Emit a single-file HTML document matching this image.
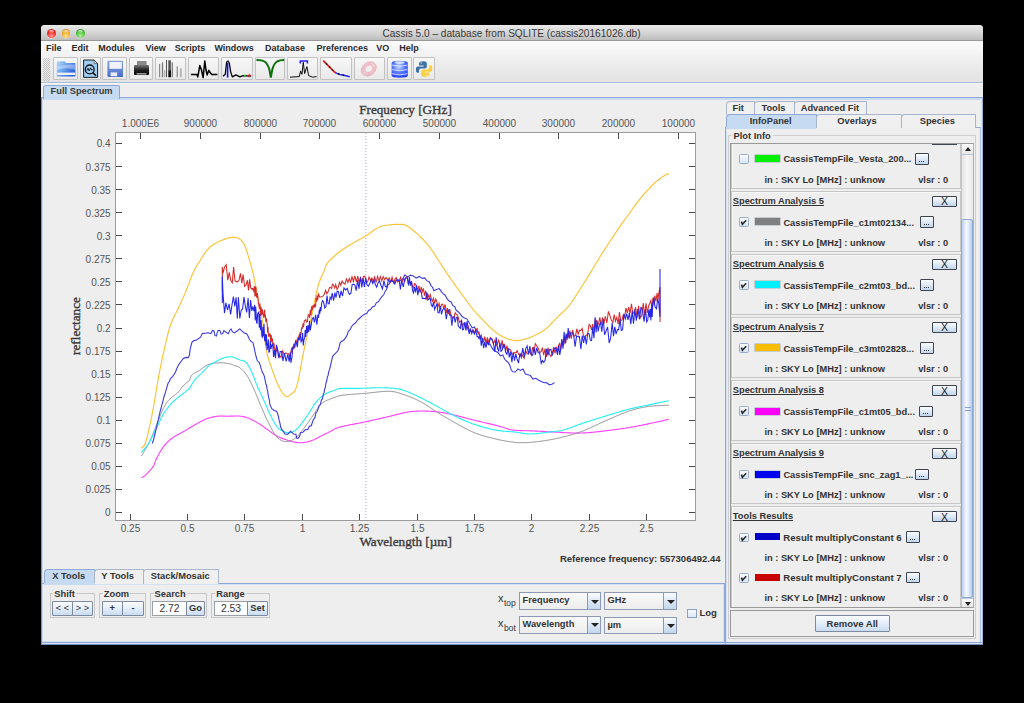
<!DOCTYPE html>
<html><head><meta charset="utf-8"><style>
html,body{margin:0;padding:0;background:#000;width:1024px;height:703px;overflow:hidden}
.a{position:absolute;box-sizing:border-box}
.t{position:absolute;white-space:pre}
</style></head><body>

<div class="a" style="left:41px;top:25px;width:942px;height:620px;background:#eeeeee;border-radius:4px 4px 0 0;"></div>
<div class="a" style="left:41px;top:25px;width:942px;height:16px;background:linear-gradient(#e9e9e9,#d4d4d4 55%,#bdbdbd);border-radius:4px 4px 0 0;border-bottom:1px solid #9a9a9a;"></div>
<div class="a" style="left:41px;top:41px;width:942px;height:41px;background:linear-gradient(#fcfcfc,#f0f0f0 40%,#e3e3e3);"></div>
<div class="a" style="left:41px;top:82px;width:942px;height:1px;background:#a9bad6;"></div>
<div class="a" style="left:41px;top:83px;width:942px;height:1px;background:#f6f6f6;"></div>
<div class="a" style="left:47.1px;top:29px;width:8.8px;height:8.8px;border-radius:50%;background:radial-gradient(circle at 50% 78%,#ff9a94 0,#ee2a22 55%,#a8231c 100%);box-shadow:0 0.5px 0.5px rgba(255,255,255,.6)"></div>
<div class="a" style="left:48.9px;top:29.8px;width:5.2px;height:3px;border-radius:50%;background:linear-gradient(rgba(255,255,255,.75),rgba(255,255,255,.1))"></div>
<div class="a" style="left:61.6px;top:29px;width:8.8px;height:8.8px;border-radius:50%;background:radial-gradient(circle at 50% 78%,#ffe58a 0,#f0a81e 55%,#b8790c 100%);box-shadow:0 0.5px 0.5px rgba(255,255,255,.6)"></div>
<div class="a" style="left:63.4px;top:29.8px;width:5.2px;height:3px;border-radius:50%;background:linear-gradient(rgba(255,255,255,.75),rgba(255,255,255,.1))"></div>
<div class="a" style="left:76.1px;top:29px;width:8.8px;height:8.8px;border-radius:50%;background:radial-gradient(circle at 50% 78%,#b6f09a 0,#4cc13a 55%,#2c7f22 100%);box-shadow:0 0.5px 0.5px rgba(255,255,255,.6)"></div>
<div class="a" style="left:77.9px;top:29.8px;width:5.2px;height:3px;border-radius:50%;background:linear-gradient(rgba(255,255,255,.75),rgba(255,255,255,.1))"></div>
<div class="t" style="left:311.50px;width:400px;text-align:center;top:28.95px;font:normal 10.1px/10.1px 'Liberation Sans';color:#3a3a3a;">Cassis 5.0 – database from SQLITE (cassis20161026.db)</div>
<div class="t" style="left:45.90px;top:43.88px;font:bold 9px/9px 'Liberation Sans';color:#2a2a2a;">File</div>
<div class="t" style="left:71.60px;top:43.88px;font:bold 9px/9px 'Liberation Sans';color:#2a2a2a;">Edit</div>
<div class="t" style="left:98.20px;top:43.88px;font:bold 9px/9px 'Liberation Sans';color:#2a2a2a;">Modules</div>
<div class="t" style="left:145.50px;top:43.88px;font:bold 9px/9px 'Liberation Sans';color:#2a2a2a;">View</div>
<div class="t" style="left:174.80px;top:43.88px;font:bold 9px/9px 'Liberation Sans';color:#2a2a2a;">Scripts</div>
<div class="t" style="left:214.40px;top:43.88px;font:bold 9px/9px 'Liberation Sans';color:#2a2a2a;">Windows</div>
<div class="t" style="left:265.00px;top:43.88px;font:bold 9px/9px 'Liberation Sans';color:#2a2a2a;">Database</div>
<div class="t" style="left:316.60px;top:43.88px;font:bold 9px/9px 'Liberation Sans';color:#2a2a2a;">Preferences</div>
<div class="t" style="left:376.30px;top:43.88px;font:bold 9px/9px 'Liberation Sans';color:#2a2a2a;">VO</div>
<div class="t" style="left:399.20px;top:43.88px;font:bold 9px/9px 'Liberation Sans';color:#2a2a2a;">Help</div>
<div class="a" style="left:43px;top:58px;width:7px;height:23px;background:repeating-conic-gradient(#c4c4c4 0 25%,transparent 0 50%) 0 0/2px 2px;"></div>
<div class="a" style="left:53px;top:57px;width:25px;height:23px;border:1px solid #c2c2c2;background:linear-gradient(#f7f7f7,#e9e9e9);border-radius:1px;"></div>
<div class="a" style="left:80px;top:57px;width:21px;height:23px;border:1px solid #c2c2c2;background:linear-gradient(#f7f7f7,#e9e9e9);border-radius:1px;"></div>
<div class="a" style="left:102px;top:57px;width:25px;height:23px;border:1px solid #c2c2c2;background:linear-gradient(#f7f7f7,#e9e9e9);border-radius:1px;"></div>
<div class="a" style="left:129px;top:57px;width:24px;height:23px;border:1px solid #c2c2c2;background:linear-gradient(#f7f7f7,#e9e9e9);border-radius:1px;"></div>
<div class="a" style="left:155px;top:57px;width:31px;height:23px;border:1px solid #c2c2c2;background:linear-gradient(#f7f7f7,#e9e9e9);border-radius:1px;"></div>
<div class="a" style="left:188px;top:57px;width:31px;height:23px;border:1px solid #c2c2c2;background:linear-gradient(#f7f7f7,#e9e9e9);border-radius:1px;"></div>
<div class="a" style="left:221px;top:57px;width:32px;height:23px;border:1px solid #c2c2c2;background:linear-gradient(#f7f7f7,#e9e9e9);border-radius:1px;"></div>
<div class="a" style="left:255px;top:57px;width:30px;height:23px;border:1px solid #c2c2c2;background:linear-gradient(#f7f7f7,#e9e9e9);border-radius:1px;"></div>
<div class="a" style="left:287px;top:57px;width:31px;height:23px;border:1px solid #c2c2c2;background:linear-gradient(#f7f7f7,#e9e9e9);border-radius:1px;"></div>
<div class="a" style="left:320px;top:57px;width:32px;height:23px;border:1px solid #c2c2c2;background:linear-gradient(#f7f7f7,#e9e9e9);border-radius:1px;"></div>
<div class="a" style="left:354px;top:57px;width:31px;height:23px;border:1px solid #c2c2c2;background:linear-gradient(#f7f7f7,#e9e9e9);border-radius:1px;"></div>
<div class="a" style="left:387px;top:57px;width:25px;height:23px;border:1px solid #c2c2c2;background:linear-gradient(#f7f7f7,#e9e9e9);border-radius:1px;"></div>
<div class="a" style="left:413px;top:57px;width:22px;height:23px;border:1px solid #c2c2c2;background:linear-gradient(#f7f7f7,#e9e9e9);border-radius:1px;"></div>
<div class="a" style="left:41px;top:97px;width:942px;height:1px;background:#8da7d6;"></div>
<div class="a" style="left:42px;top:98px;width:940px;height:2px;background:#c9dcf2;"></div>
<div class="a" style="left:43px;top:84.5px;width:77px;height:14px;background:#c6dbf1;border:1px solid #8fa8d6;border-bottom:none;border-radius:3px 2px 0 0"></div>
<div class="t" style="left:50.60px;top:87.43px;font:bold 9.3px/9.3px 'Liberation Sans';color:#3a3a3a;">Full Spectrum</div>
<div class="a" style="left:41px;top:98px;width:1px;height:547px;background:#7590c4;"></div>
<div class="a" style="left:42px;top:98px;width:1px;height:547px;background:#cddcf0;"></div>
<div class="a" style="left:982px;top:98px;width:1px;height:547px;background:#9fb5da;"></div>
<div class="a" style="left:981px;top:98px;width:1px;height:547px;background:#d6e2f2;"></div>
<div class="a" style="left:41px;top:644px;width:942px;height:1px;background:#7590c4;"></div>
<svg class="a" style="left:0;top:0" width="1024" height="703" viewBox="0 0 1024 703">
<rect x="115.5" y="132.5" width="580" height="388" fill="#fff" stroke="#9c9c9c" stroke-width="1"/>
<line x1="365.8" y1="133" x2="365.8" y2="520" stroke="#9d9dfa" stroke-width="1" stroke-dasharray="1,2" opacity="0.9"/>
<path d="M116,512.5 H122 M689,512.5 H695 M116,489.5 H122 M689,489.5 H695 M116,466.5 H122 M689,466.5 H695 M116,443.5 H122 M689,443.5 H695 M116,420.5 H122 M689,420.5 H695 M116,397.5 H122 M689,397.5 H695 M116,374.5 H122 M689,374.5 H695 M116,351.5 H122 M689,351.5 H695 M116,328.5 H122 M689,328.5 H695 M116,304.5 H122 M689,304.5 H695 M116,281.5 H122 M689,281.5 H695 M116,258.5 H122 M689,258.5 H695 M116,235.5 H122 M689,235.5 H695 M116,212.5 H122 M689,212.5 H695 M116,189.5 H122 M689,189.5 H695 M116,166.5 H122 M689,166.5 H695 M116,143.5 H122 M689,143.5 H695 M130.5,514 V520 M187.5,514 V520 M244.5,514 V520 M302.5,514 V520 M359.5,514 V520 M417.5,514 V520 M474.5,514 V520 M531.5,514 V520 M589.5,514 V520 M646.5,514 V520 M140.5,133 V139 M200.5,133 V139 M260.5,133 V139 M319.5,133 V139 M379.5,133 V139 M439.5,133 V139 M499.5,133 V139 M558.5,133 V139 M618.5,133 V139 M678.5,133 V139" stroke="#4a4a4a" stroke-width="1" fill="none"/>
<path d="M141.5,477.7 L141.9,477.5 L142.4,477.3 L143.0,477.0 L143.7,476.6 L144.5,476.0 L145.4,475.2 L145.8,474.8 L146.2,474.4 L146.7,473.9 L147.2,473.4 L147.7,472.9 L148.2,472.3 L148.8,471.7 L149.3,471.1 L149.9,470.5 L150.4,469.9 L151.0,469.3 L151.5,468.7 L152.0,468.1 L152.4,467.5 L152.8,466.9 L153.2,466.4 L153.6,465.7 L154.0,465.0 L154.3,464.4 L154.5,463.8 L154.7,463.2 L154.9,462.5 L155.1,461.9 L155.3,461.2 L155.6,460.5 L155.9,459.7 L156.3,458.9 L156.6,458.4 L156.8,457.9 L157.1,457.3 L157.4,456.7 L157.8,456.1 L158.1,455.5 L158.4,454.9 L158.8,454.2 L159.1,453.6 L159.5,452.9 L159.9,452.3 L160.3,451.6 L160.6,451.0 L161.0,450.3 L161.4,449.7 L161.8,449.1 L162.2,448.5 L162.6,447.9 L163.0,447.3 L163.4,446.8 L163.9,446.2 L164.3,445.6 L164.8,445.0 L165.3,444.5 L165.8,443.9 L166.3,443.4 L166.8,442.9 L167.3,442.4 L167.8,441.9 L168.3,441.4 L168.8,440.9 L169.3,440.4 L169.9,439.9 L170.4,439.5 L170.9,439.1 L171.5,438.6 L172.0,438.2 L172.6,437.8 L173.2,437.3 L173.8,436.9 L174.4,436.5 L175.1,436.2 L175.7,435.8 L176.4,435.4 L177.0,435.1 L177.7,434.7 L178.3,434.4 L179.0,434.1 L179.6,433.8 L180.2,433.4 L180.8,433.1 L181.4,432.8 L181.9,432.5 L182.7,432.1 L183.4,431.6 L184.1,431.2 L184.7,430.9 L185.4,430.5 L186.0,430.1 L186.6,429.8 L187.2,429.4 L187.8,429.0 L188.5,428.7 L189.1,428.3 L189.7,427.9 L190.4,427.5 L191.0,427.2 L191.6,426.8 L192.2,426.4 L192.8,426.0 L193.4,425.6 L194.1,425.2 L194.7,424.8 L195.4,424.4 L196.2,424.0 L196.8,423.7 L197.4,423.4 L198.0,423.0 L198.6,422.7 L199.2,422.3 L199.9,421.9 L200.5,421.6 L201.2,421.2 L201.9,420.9 L202.6,420.5 L203.3,420.2 L204.0,419.9 L204.7,419.6 L205.4,419.3 L206.1,419.0 L206.8,418.8 L207.5,418.5 L208.2,418.3 L208.9,418.1 L209.6,417.9 L210.3,417.7 L211.1,417.5 L211.8,417.3 L212.5,417.1 L213.3,416.9 L214.0,416.8 L214.7,416.7 L215.4,416.5 L216.1,416.4 L216.8,416.3 L217.5,416.2 L218.3,416.1 L219.0,416.1 L219.7,416.0 L220.4,416.0 L221.1,416.0 L221.8,416.0 L222.4,416.0 L223.1,416.1 L223.8,416.1 L224.5,416.1 L225.2,416.2 L226.0,416.2 L226.7,416.2 L227.5,416.2 L228.2,416.2 L228.9,416.2 L229.6,416.2 L230.4,416.1 L231.1,416.1 L231.9,416.1 L232.7,416.1 L233.5,416.0 L234.2,416.0 L235.0,416.0 L235.8,416.0 L236.5,416.0 L237.3,416.0 L238.0,416.0 L238.7,416.0 L239.4,416.0 L240.0,416.1 L240.8,416.2 L241.6,416.3 L242.4,416.4 L243.1,416.6 L243.8,416.8 L244.5,416.9 L245.2,417.1 L245.8,417.3 L246.5,417.6 L247.1,417.8 L247.8,418.0 L248.5,418.3 L249.2,418.6 L249.8,418.8 L250.5,419.1 L251.1,419.4 L251.8,419.7 L252.5,420.0 L253.1,420.3 L253.8,420.7 L254.5,421.0 L255.1,421.4 L255.8,421.8 L256.4,422.1 L257.1,422.5 L257.7,422.9 L258.3,423.2 L258.9,423.6 L259.5,424.0 L260.1,424.4 L260.7,424.8 L261.3,425.2 L261.9,425.6 L262.5,426.0 L263.1,426.4 L263.7,426.9 L264.3,427.3 L264.9,427.7 L265.6,428.2 L266.1,428.6 L266.7,429.0 L267.3,429.4 L267.9,429.8 L268.4,430.3 L269.0,430.7 L269.6,431.2 L270.2,431.6 L270.8,432.1 L271.4,432.5 L272.0,432.9 L272.6,433.4 L273.2,433.8 L273.8,434.2 L274.4,434.6 L275.0,435.0 L275.6,435.3 L276.3,435.7 L276.9,436.0 L277.6,436.4 L278.2,436.7 L278.9,437.0 L279.5,437.3 L280.1,437.6 L280.8,437.8 L281.4,438.1 L282.1,438.4 L282.8,438.6 L283.4,438.9 L284.1,439.1 L284.8,439.4 L285.5,439.6 L286.2,439.8 L286.9,440.0 L287.6,440.3 L288.3,440.5 L289.1,440.7 L289.9,440.9 L290.6,441.1 L291.4,441.3 L292.1,441.5 L292.9,441.7 L293.6,441.9 L294.3,442.0 L295.0,442.2 L295.7,442.3 L296.3,442.4 L296.9,442.5 L297.8,442.6 L298.6,442.7 L299.3,442.8 L300.0,442.8 L300.6,442.8 L301.3,442.8 L301.9,442.8 L302.6,442.7 L303.3,442.6 L304.0,442.5 L304.7,442.4 L305.3,442.3 L306.0,442.2 L306.7,442.0 L307.4,441.9 L308.1,441.7 L308.8,441.5 L309.5,441.3 L310.2,441.1 L311.0,440.9 L311.7,440.6 L312.5,440.3 L313.1,440.0 L313.8,439.8 L314.4,439.5 L315.1,439.1 L315.8,438.8 L316.5,438.5 L317.2,438.1 L317.8,437.7 L318.5,437.4 L319.2,437.0 L319.9,436.6 L320.6,436.3 L321.2,435.9 L321.9,435.6 L322.5,435.3 L323.2,435.0 L323.9,434.6 L324.6,434.3 L325.2,433.9 L325.9,433.6 L326.5,433.3 L327.1,433.0 L327.8,432.7 L328.4,432.4 L329.0,432.0 L329.7,431.7 L330.3,431.4 L331.0,431.1 L331.6,430.8 L332.1,430.5 L332.6,430.2 L333.0,430.0 L333.5,429.7 L333.9,429.4 L334.4,429.1 L334.9,428.8 L335.5,428.6 L336.1,428.3 L336.9,428.0 L337.8,427.7 L338.8,427.3 L340.0,427.0 L340.5,426.9 L341.0,426.7 L341.5,426.6 L342.1,426.5 L342.6,426.4 L343.2,426.2 L343.9,426.1 L344.5,425.9 L345.2,425.8 L345.8,425.7 L346.5,425.5 L347.2,425.4 L347.9,425.2 L348.7,425.1 L349.4,424.9 L350.1,424.8 L350.9,424.6 L351.7,424.5 L352.4,424.4 L353.2,424.2 L354.0,424.1 L354.7,423.9 L355.5,423.8 L356.3,423.6 L357.1,423.5 L357.8,423.3 L358.6,423.2 L359.4,423.0 L360.1,422.9 L360.9,422.7 L361.6,422.6 L362.3,422.4 L363.0,422.3 L363.7,422.2 L364.4,422.0 L365.1,421.9 L365.8,421.7 L366.4,421.6 L367.2,421.4 L367.9,421.3 L368.7,421.1 L369.4,420.9 L370.1,420.8 L370.9,420.6 L371.6,420.5 L372.3,420.3 L373.0,420.1 L373.7,420.0 L374.4,419.8 L375.1,419.7 L375.8,419.5 L376.4,419.4 L377.1,419.2 L377.8,419.0 L378.5,418.9 L379.1,418.7 L379.8,418.6 L380.5,418.4 L381.1,418.3 L381.8,418.1 L382.5,418.0 L383.1,417.8 L383.8,417.6 L384.5,417.5 L385.2,417.3 L385.8,417.2 L386.5,417.0 L387.2,416.9 L387.9,416.7 L388.6,416.5 L389.3,416.4 L390.0,416.2 L390.7,416.0 L391.4,415.9 L392.1,415.7 L392.8,415.5 L393.5,415.3 L394.2,415.1 L394.9,415.0 L395.6,414.8 L396.3,414.6 L397.0,414.4 L397.7,414.2 L398.4,414.1 L399.1,413.9 L399.8,413.7 L400.5,413.6 L401.2,413.4 L401.9,413.2 L402.6,413.1 L403.3,412.9 L404.0,412.8 L404.7,412.6 L405.4,412.5 L406.0,412.3 L406.7,412.2 L407.4,412.1 L408.1,412.0 L408.7,411.9 L409.4,411.8 L410.2,411.7 L410.9,411.6 L411.7,411.5 L412.4,411.5 L413.1,411.4 L413.9,411.3 L414.6,411.3 L415.3,411.2 L416.0,411.2 L416.8,411.1 L417.5,411.1 L418.2,411.1 L418.9,411.0 L419.6,411.0 L420.3,411.0 L421.1,411.0 L421.8,411.0 L422.5,411.0 L423.2,411.0 L423.9,411.0 L424.6,411.0 L425.3,411.1 L426.0,411.1 L426.7,411.1 L427.5,411.1 L428.2,411.2 L428.9,411.2 L429.6,411.2 L430.3,411.3 L431.0,411.3 L431.7,411.4 L432.3,411.4 L433.0,411.5 L433.7,411.5 L434.4,411.6 L435.0,411.7 L435.7,411.7 L436.4,411.8 L437.0,411.9 L437.7,412.0 L438.4,412.0 L439.1,412.1 L439.8,412.2 L440.4,412.3 L441.1,412.4 L441.8,412.5 L442.5,412.6 L443.2,412.8 L444.0,412.9 L444.7,413.0 L445.4,413.1 L446.1,413.3 L446.9,413.4 L447.6,413.6 L448.4,413.7 L449.0,413.8 L449.7,414.0 L450.3,414.1 L451.0,414.2 L451.6,414.4 L452.2,414.5 L452.9,414.7 L453.6,414.8 L454.2,415.0 L454.9,415.2 L455.5,415.3 L456.2,415.5 L456.9,415.7 L457.6,415.8 L458.2,416.0 L458.9,416.2 L459.6,416.4 L460.3,416.6 L461.0,416.8 L461.7,416.9 L462.4,417.1 L463.1,417.3 L463.8,417.5 L464.5,417.7 L465.2,417.9 L466.0,418.1 L466.7,418.3 L467.4,418.5 L468.2,418.7 L468.9,418.8 L469.6,419.0 L470.4,419.2 L471.1,419.4 L471.9,419.6 L472.5,419.8 L473.2,419.9 L473.8,420.1 L474.5,420.2 L475.2,420.4 L475.9,420.6 L476.6,420.7 L477.3,420.9 L478.1,421.1 L478.8,421.3 L479.5,421.4 L480.3,421.6 L481.0,421.8 L481.7,422.0 L482.5,422.2 L483.3,422.3 L484.0,422.5 L484.8,422.7 L485.5,422.9 L486.3,423.1 L487.0,423.2 L487.7,423.4 L488.5,423.6 L489.2,423.8 L489.9,423.9 L490.7,424.1 L491.4,424.3 L492.1,424.4 L492.8,424.6 L493.5,424.8 L494.1,424.9 L494.8,425.1 L495.4,425.3 L496.1,425.4 L496.7,425.6 L497.3,425.7 L497.9,425.9 L498.4,426.0 L499.0,426.1 L499.5,426.3 L500.0,426.4 L501.1,426.7 L502.0,427.0 L502.9,427.2 L503.7,427.5 L504.4,427.7 L505.0,427.9 L505.6,428.2 L506.2,428.4 L506.7,428.6 L507.2,428.8 L507.8,428.9 L508.3,429.1 L508.9,429.3 L509.5,429.4 L510.2,429.6 L510.9,429.7 L511.7,429.9 L512.6,430.0 L513.2,430.1 L513.8,430.1 L514.4,430.2 L515.0,430.3 L515.7,430.3 L516.4,430.4 L517.0,430.4 L517.7,430.5 L518.5,430.5 L519.2,430.5 L519.9,430.6 L520.7,430.6 L521.4,430.6 L522.2,430.6 L522.9,430.7 L523.7,430.7 L524.4,430.7 L525.2,430.7 L526.0,430.7 L526.8,430.8 L527.5,430.8 L528.3,430.8 L529.0,430.8 L529.8,430.8 L530.5,430.9 L531.3,430.9 L532.0,430.9 L532.7,430.9 L533.4,431.0 L534.1,431.0 L534.9,431.0 L535.6,431.1 L536.4,431.1 L537.1,431.1 L537.8,431.2 L538.6,431.2 L539.3,431.3 L540.0,431.3 L540.7,431.3 L541.5,431.4 L542.2,431.4 L542.9,431.4 L543.6,431.5 L544.3,431.5 L545.0,431.6 L545.8,431.6 L546.5,431.6 L547.2,431.7 L547.9,431.7 L548.6,431.7 L549.3,431.8 L550.0,431.8 L550.7,431.9 L551.4,431.9 L552.2,431.9 L552.9,432.0 L553.6,432.0 L554.3,432.0 L555.1,432.1 L555.8,432.1 L556.5,432.2 L557.3,432.2 L558.0,432.2 L558.8,432.3 L559.5,432.3 L560.2,432.4 L561.0,432.4 L561.7,432.5 L562.5,432.5 L563.2,432.6 L564.0,432.6 L564.7,432.7 L565.4,432.7 L566.2,432.7 L566.9,432.8 L567.6,432.8 L568.3,432.8 L569.0,432.9 L569.7,432.9 L570.4,432.9 L571.1,433.0 L571.8,433.0 L572.4,433.0 L573.1,433.0 L573.9,433.0 L574.6,433.0 L575.4,433.0 L576.1,433.0 L576.8,433.0 L577.4,433.1 L578.1,433.1 L578.8,433.1 L579.4,433.0 L580.1,433.0 L580.7,433.0 L581.4,433.0 L582.0,433.0 L582.7,433.0 L583.4,432.9 L584.1,432.9 L584.8,432.9 L585.5,432.8 L586.3,432.8 L587.1,432.7 L587.9,432.7 L588.8,432.6 L589.4,432.6 L590.0,432.5 L590.7,432.4 L591.3,432.4 L592.0,432.3 L592.6,432.3 L593.3,432.2 L594.0,432.1 L594.7,432.1 L595.4,432.0 L596.2,431.9 L596.9,431.8 L597.6,431.7 L598.4,431.7 L599.1,431.6 L599.9,431.5 L600.6,431.4 L601.4,431.3 L602.1,431.2 L602.9,431.1 L603.7,431.1 L604.4,431.0 L605.1,430.9 L605.9,430.8 L606.6,430.7 L607.4,430.6 L608.1,430.5 L608.8,430.4 L609.5,430.3 L610.2,430.3 L610.9,430.2 L611.5,430.1 L612.2,430.0 L613.0,429.9 L613.7,429.8 L614.5,429.7 L615.2,429.6 L615.9,429.5 L616.6,429.4 L617.3,429.3 L618.1,429.2 L618.8,429.1 L619.4,429.0 L620.1,428.9 L620.8,428.8 L621.5,428.7 L622.2,428.6 L622.9,428.5 L623.5,428.4 L624.2,428.3 L624.9,428.2 L625.6,428.1 L626.2,428.0 L626.9,427.9 L627.6,427.8 L628.3,427.7 L628.9,427.6 L629.6,427.5 L630.3,427.3 L631.0,427.2 L631.7,427.1 L632.4,427.0 L633.1,426.9 L633.8,426.7 L634.5,426.6 L635.2,426.5 L635.9,426.3 L636.6,426.2 L637.4,426.1 L638.1,425.9 L638.8,425.8 L639.5,425.6 L640.2,425.5 L640.9,425.4 L641.6,425.2 L642.3,425.1 L643.0,424.9 L643.7,424.8 L644.5,424.6 L645.2,424.5 L645.9,424.3 L646.5,424.2 L647.2,424.1 L647.9,423.9 L648.6,423.8 L649.3,423.6 L650.0,423.5 L650.6,423.3 L651.3,423.2 L652.1,423.0 L652.8,422.9 L653.6,422.7 L654.4,422.5 L655.2,422.4 L656.0,422.2 L656.8,422.0 L657.7,421.8 L658.5,421.6 L659.3,421.5 L660.1,421.3 L660.9,421.1 L661.7,420.9 L662.4,420.7 L663.2,420.6 L663.9,420.4 L664.6,420.3 L665.2,420.1 L665.9,420.0 L666.5,419.8 L667.0,419.7 L667.5,419.6 L668.0,419.5 L668.4,419.4 L668.8,419.3" stroke="#ff3cff" stroke-width="1.1" fill="none" stroke-linejoin="round"/>
<path d="M141.4,456.0 L141.6,455.7 L141.8,455.3 L142.1,454.9 L142.4,454.4 L142.7,453.9 L143.0,453.4 L143.3,452.8 L143.7,452.2 L144.1,451.6 L144.5,451.0 L144.9,450.3 L145.3,449.6 L145.7,448.9 L146.1,448.2 L146.5,447.5 L146.9,446.8 L147.3,446.1 L147.7,445.4 L148.1,444.6 L148.5,443.9 L148.9,443.2 L149.2,442.5 L149.5,441.9 L149.8,441.3 L150.1,440.7 L150.3,440.1 L150.6,439.4 L150.9,438.8 L151.2,438.2 L151.4,437.5 L151.7,436.8 L152.0,436.2 L152.3,435.5 L152.5,434.8 L152.8,434.2 L153.1,433.5 L153.3,432.8 L153.6,432.1 L153.9,431.5 L154.1,430.8 L154.4,430.1 L154.7,429.4 L154.9,428.7 L155.2,428.1 L155.5,427.4 L155.8,426.7 L156.0,426.1 L156.3,425.4 L156.6,424.7 L156.8,424.1 L157.1,423.4 L157.4,422.7 L157.7,422.0 L158.0,421.3 L158.2,420.6 L158.5,419.9 L158.8,419.2 L159.1,418.5 L159.4,417.8 L159.7,417.1 L159.9,416.4 L160.2,415.7 L160.5,415.0 L160.8,414.3 L161.0,413.7 L161.3,413.0 L161.6,412.4 L161.9,411.7 L162.1,411.1 L162.4,410.6 L162.6,410.0 L162.9,409.4 L163.2,408.9 L163.4,408.4 L163.8,407.5 L164.3,406.7 L164.7,406.0 L165.0,405.3 L165.4,404.6 L165.8,404.0 L166.2,403.5 L166.5,402.9 L166.9,402.4 L167.3,401.9 L167.7,401.4 L168.1,400.9 L168.6,400.3 L169.1,399.8 L169.6,399.3 L170.1,398.8 L170.7,398.3 L171.3,397.8 L171.9,397.3 L172.5,396.9 L173.1,396.4 L173.7,395.9 L174.3,395.5 L174.9,395.0 L175.5,394.6 L176.1,394.1 L176.7,393.6 L177.2,393.2 L177.7,392.7 L178.2,392.1 L178.7,391.6 L179.2,391.0 L179.7,390.4 L180.1,389.9 L180.5,389.3 L180.9,388.7 L181.3,388.2 L181.7,387.6 L182.1,387.1 L182.6,386.6 L183.0,386.1 L183.4,385.6 L184.0,385.0 L184.6,384.5 L185.2,384.0 L185.8,383.5 L186.4,383.0 L187.0,382.5 L187.6,382.1 L188.1,381.6 L188.6,381.1 L189.1,380.6 L189.5,380.0 L189.8,379.4 L190.1,378.7 L190.3,378.0 L190.5,377.4 L190.8,376.7 L191.0,376.1 L191.4,375.5 L191.9,374.9 L192.4,374.5 L192.9,374.1 L193.4,373.7 L194.0,373.4 L194.7,373.0 L195.3,372.7 L196.0,372.3 L196.7,372.0 L197.5,371.6 L198.2,371.2 L199.0,370.7 L199.5,370.4 L200.1,370.0 L200.7,369.6 L201.3,369.1 L201.9,368.7 L202.5,368.2 L203.1,367.8 L203.7,367.3 L204.4,366.9 L205.0,366.4 L205.7,366.0 L206.3,365.6 L207.0,365.2 L207.7,364.9 L208.3,364.6 L209.0,364.3 L209.7,364.1 L210.4,363.9 L211.1,363.7 L211.8,363.5 L212.5,363.4 L213.3,363.3 L214.0,363.2 L214.7,363.1 L215.5,363.0 L216.2,363.0 L216.9,362.9 L217.6,362.9 L218.3,362.9 L219.0,362.8 L219.7,362.8 L220.3,362.8 L221.1,362.8 L221.9,362.8 L222.7,362.8 L223.5,362.8 L224.2,362.9 L224.9,363.0 L225.6,363.1 L226.3,363.2 L227.0,363.3 L227.6,363.4 L228.3,363.5 L228.9,363.6 L229.7,363.8 L230.4,364.0 L231.2,364.2 L231.8,364.4 L232.5,364.7 L233.1,365.0 L233.8,365.2 L234.4,365.5 L235.0,365.7 L235.8,366.0 L236.4,366.1 L237.1,366.3 L237.8,366.5 L238.5,366.8 L239.2,367.2 L240.0,367.8 L240.4,368.1 L240.8,368.5 L241.3,368.9 L241.7,369.3 L242.2,369.7 L242.7,370.2 L243.2,370.7 L243.7,371.2 L244.2,371.7 L244.7,372.3 L245.2,372.9 L245.6,373.5 L246.1,374.2 L246.6,374.9 L247.1,375.6 L247.4,376.1 L247.7,376.6 L248.1,377.2 L248.4,377.8 L248.7,378.3 L249.0,378.9 L249.4,379.5 L249.7,380.2 L250.0,380.8 L250.3,381.5 L250.6,382.1 L251.0,382.8 L251.3,383.5 L251.6,384.2 L251.9,384.8 L252.3,385.5 L252.6,386.2 L252.9,387.0 L253.2,387.7 L253.6,388.4 L253.9,389.1 L254.2,389.8 L254.5,390.4 L254.7,391.0 L255.0,391.7 L255.3,392.3 L255.6,392.9 L255.8,393.6 L256.1,394.2 L256.4,394.9 L256.7,395.6 L256.9,396.2 L257.2,396.9 L257.5,397.6 L257.8,398.3 L258.0,398.9 L258.3,399.6 L258.6,400.3 L258.8,401.0 L259.1,401.7 L259.4,402.3 L259.7,403.0 L259.9,403.7 L260.2,404.3 L260.5,405.0 L260.8,405.6 L261.0,406.3 L261.3,406.9 L261.6,407.6 L261.9,408.3 L262.2,408.9 L262.5,409.6 L262.8,410.3 L263.1,411.0 L263.4,411.6 L263.7,412.3 L264.0,413.0 L264.3,413.6 L264.5,414.3 L264.8,415.0 L265.1,415.6 L265.4,416.3 L265.7,416.9 L266.0,417.6 L266.3,418.2 L266.6,418.8 L266.9,419.5 L267.2,420.1 L267.5,420.7 L267.8,421.3 L268.1,421.9 L268.4,422.5 L268.8,423.2 L269.1,423.9 L269.5,424.6 L269.8,425.4 L270.2,426.1 L270.6,426.8 L270.9,427.5 L271.3,428.2 L271.6,428.8 L272.0,429.5 L272.4,430.2 L272.7,430.8 L273.1,431.5 L273.4,432.1 L273.8,432.7 L274.2,433.2 L274.5,433.8 L274.9,434.3 L275.2,434.8 L275.6,435.3 L276.1,436.0 L276.7,436.6 L277.2,437.2 L277.8,437.8 L278.3,438.3 L278.9,438.7 L279.4,439.2 L280.0,439.5 L280.5,439.9 L281.1,440.2 L281.6,440.5 L282.2,440.8 L282.7,441.0 L283.4,441.2 L284.1,441.4 L284.8,441.6 L285.5,441.6 L286.2,441.6 L287.0,441.6 L287.7,441.5 L288.4,441.4 L289.1,441.2 L289.8,441.0 L290.4,440.8 L291.1,440.6 L291.7,440.3 L292.4,440.0 L293.0,439.6 L293.7,439.2 L294.3,438.8 L295.0,438.4 L295.6,437.9 L296.3,437.4 L296.9,436.8 L297.4,436.4 L297.8,435.9 L298.3,435.4 L298.8,434.9 L299.3,434.3 L299.7,433.7 L300.2,433.2 L300.7,432.6 L301.2,431.9 L301.6,431.3 L302.1,430.7 L302.6,430.1 L303.1,429.4 L303.5,428.8 L304.0,428.2 L304.4,427.7 L304.8,427.1 L305.2,426.6 L305.6,426.0 L306.0,425.5 L306.4,424.9 L306.8,424.4 L307.3,423.8 L307.7,423.2 L308.1,422.6 L308.5,422.1 L308.9,421.5 L309.3,420.9 L309.8,420.2 L310.2,419.6 L310.6,419.0 L311.1,418.3 L311.5,417.8 L311.8,417.2 L312.2,416.6 L312.6,416.0 L313.0,415.4 L313.4,414.8 L313.8,414.1 L314.2,413.5 L314.7,412.9 L315.1,412.2 L315.5,411.6 L315.9,410.9 L316.3,410.3 L316.7,409.7 L317.1,409.0 L317.5,408.5 L317.9,407.9 L318.3,407.3 L318.7,406.8 L319.0,406.4 L319.4,405.9 L319.7,405.5 L320.4,404.7 L321.0,404.1 L321.5,403.6 L322.0,403.1 L322.5,402.8 L323.0,402.5 L323.5,402.2 L324.0,401.9 L324.6,401.6 L325.3,401.2 L325.9,400.9 L326.5,400.6 L327.1,400.3 L327.7,400.0 L328.4,399.8 L329.0,399.5 L329.7,399.2 L330.4,398.9 L331.1,398.7 L331.8,398.4 L332.5,398.2 L333.2,397.9 L333.9,397.7 L334.5,397.5 L335.1,397.3 L335.7,397.0 L336.2,396.8 L336.7,396.6 L337.2,396.5 L337.8,396.3 L338.4,396.1 L339.1,395.9 L339.9,395.7 L340.8,395.5 L341.8,395.4 L343.0,395.2 L343.5,395.1 L344.0,395.1 L344.6,395.0 L345.2,394.9 L345.8,394.9 L346.4,394.8 L347.0,394.7 L347.7,394.7 L348.4,394.6 L349.0,394.6 L349.7,394.5 L350.5,394.4 L351.2,394.4 L351.9,394.3 L352.7,394.3 L353.4,394.2 L354.2,394.1 L355.0,394.1 L355.7,394.0 L356.5,394.0 L357.3,393.9 L358.1,393.8 L358.9,393.8 L359.6,393.7 L360.4,393.7 L361.2,393.6 L362.0,393.6 L362.7,393.5 L363.5,393.4 L364.2,393.4 L365.0,393.3 L365.7,393.3 L366.4,393.2 L367.1,393.1 L367.8,393.1 L368.6,393.0 L369.3,392.9 L370.0,392.9 L370.8,392.8 L371.5,392.7 L372.2,392.6 L373.0,392.5 L373.7,392.4 L374.5,392.3 L375.2,392.3 L376.0,392.2 L376.7,392.1 L377.5,392.0 L378.2,391.9 L378.9,391.8 L379.7,391.8 L380.4,391.7 L381.1,391.6 L381.9,391.6 L382.6,391.5 L383.3,391.4 L384.0,391.4 L384.7,391.4 L385.3,391.3 L386.0,391.3 L386.7,391.3 L387.3,391.3 L388.0,391.3 L388.6,391.3 L389.2,391.3 L389.8,391.3 L390.6,391.4 L391.4,391.4 L392.2,391.5 L393.0,391.6 L393.7,391.7 L394.4,391.8 L395.1,392.0 L395.8,392.1 L396.5,392.3 L397.2,392.4 L397.8,392.6 L398.5,392.8 L399.1,393.0 L399.7,393.2 L400.4,393.4 L401.0,393.6 L401.6,393.8 L402.2,394.1 L402.9,394.3 L403.5,394.5 L404.2,394.7 L404.8,395.0 L405.5,395.2 L406.2,395.4 L406.8,395.7 L407.5,395.9 L408.1,396.1 L408.8,396.4 L409.4,396.6 L410.1,396.9 L410.7,397.1 L411.4,397.4 L412.0,397.7 L412.7,398.0 L413.3,398.2 L414.0,398.5 L414.6,398.8 L415.3,399.1 L415.9,399.4 L416.6,399.7 L417.2,400.0 L417.9,400.3 L418.5,400.7 L419.2,401.0 L419.8,401.3 L420.5,401.7 L421.1,402.0 L421.7,402.3 L422.3,402.7 L422.9,403.0 L423.5,403.3 L424.0,403.7 L424.6,404.0 L425.2,404.4 L425.8,404.7 L426.3,405.1 L426.9,405.5 L427.5,405.8 L428.1,406.2 L428.7,406.6 L429.2,407.0 L429.8,407.4 L430.4,407.8 L431.0,408.1 L431.6,408.5 L432.2,408.9 L432.8,409.3 L433.4,409.8 L434.1,410.2 L434.7,410.6 L435.4,411.0 L436.0,411.4 L436.7,411.8 L437.3,412.1 L437.8,412.5 L438.4,412.8 L439.0,413.2 L439.5,413.5 L440.1,413.9 L440.7,414.3 L441.3,414.6 L441.9,415.0 L442.5,415.4 L443.1,415.8 L443.8,416.1 L444.4,416.5 L445.0,416.9 L445.6,417.3 L446.3,417.6 L446.9,418.0 L447.5,418.4 L448.1,418.8 L448.8,419.2 L449.4,419.5 L450.0,419.9 L450.7,420.3 L451.3,420.7 L451.9,421.0 L452.6,421.4 L453.2,421.8 L453.8,422.1 L454.5,422.5 L455.1,422.8 L455.7,423.2 L456.3,423.5 L456.9,423.8 L457.6,424.2 L458.2,424.5 L458.8,424.9 L459.5,425.2 L460.1,425.6 L460.7,425.9 L461.3,426.3 L462.0,426.6 L462.6,427.0 L463.2,427.3 L463.9,427.6 L464.5,428.0 L465.1,428.3 L465.8,428.6 L466.4,428.9 L467.0,429.3 L467.6,429.6 L468.3,429.9 L468.9,430.2 L469.5,430.5 L470.2,430.8 L470.8,431.1 L471.4,431.4 L472.0,431.7 L472.7,432.0 L473.3,432.3 L473.9,432.5 L474.6,432.8 L475.2,433.0 L475.8,433.3 L476.5,433.6 L477.2,433.8 L477.9,434.1 L478.6,434.3 L479.3,434.6 L480.0,434.8 L480.7,435.0 L481.4,435.3 L482.1,435.5 L482.8,435.7 L483.5,435.9 L484.2,436.1 L484.9,436.3 L485.6,436.5 L486.3,436.7 L487.0,436.8 L487.7,437.0 L488.4,437.2 L489.1,437.4 L489.8,437.5 L490.5,437.7 L491.1,437.9 L491.8,438.0 L492.4,438.2 L493.1,438.3 L493.7,438.5 L494.4,438.6 L495.0,438.8 L495.8,439.0 L496.6,439.2 L497.3,439.4 L498.1,439.5 L498.8,439.7 L499.6,439.9 L500.3,440.0 L501.0,440.2 L501.7,440.3 L502.4,440.5 L503.1,440.6 L503.8,440.7 L504.5,440.8 L505.2,441.0 L505.9,441.1 L506.6,441.2 L507.3,441.3 L507.9,441.4 L508.6,441.5 L509.3,441.6 L509.9,441.7 L510.6,441.8 L511.4,441.9 L512.1,442.0 L512.8,442.1 L513.5,442.2 L514.2,442.3 L514.9,442.3 L515.5,442.4 L516.2,442.5 L516.9,442.5 L517.5,442.6 L518.2,442.6 L518.9,442.7 L519.6,442.7 L520.3,442.7 L521.1,442.7 L521.8,442.7 L522.6,442.7 L523.4,442.7 L524.3,442.7 L524.9,442.7 L525.6,442.7 L526.2,442.6 L526.9,442.6 L527.6,442.5 L528.2,442.5 L528.9,442.5 L529.6,442.4 L530.4,442.3 L531.1,442.3 L531.8,442.2 L532.6,442.2 L533.3,442.1 L534.1,442.0 L534.8,441.9 L535.6,441.9 L536.3,441.8 L537.1,441.7 L537.8,441.6 L538.6,441.5 L539.3,441.4 L540.1,441.3 L540.9,441.2 L541.6,441.1 L542.3,441.0 L543.1,440.9 L543.8,440.8 L544.5,440.7 L545.2,440.6 L545.9,440.5 L546.6,440.4 L547.3,440.3 L548.0,440.1 L548.7,440.0 L549.4,439.9 L550.1,439.8 L550.8,439.6 L551.5,439.5 L552.2,439.4 L552.9,439.2 L553.6,439.1 L554.3,439.0 L555.0,438.8 L555.7,438.7 L556.4,438.5 L557.1,438.4 L557.8,438.2 L558.5,438.1 L559.2,437.9 L559.9,437.7 L560.6,437.6 L561.3,437.4 L562.0,437.2 L562.7,437.1 L563.4,436.9 L564.1,436.7 L564.7,436.6 L565.4,436.4 L566.1,436.2 L566.7,436.0 L567.4,435.9 L568.1,435.7 L568.7,435.5 L569.4,435.3 L570.1,435.2 L570.7,435.0 L571.4,434.8 L572.0,434.6 L572.7,434.4 L573.4,434.2 L574.0,434.0 L574.7,433.8 L575.4,433.6 L576.0,433.4 L576.7,433.2 L577.4,433.0 L578.1,432.7 L578.7,432.5 L579.4,432.3 L580.1,432.0 L580.8,431.8 L581.5,431.5 L582.2,431.3 L582.9,431.0 L583.5,430.8 L584.1,430.5 L584.8,430.3 L585.4,430.0 L586.0,429.7 L586.7,429.5 L587.3,429.2 L587.9,428.9 L588.6,428.6 L589.2,428.3 L589.8,428.1 L590.5,427.8 L591.1,427.5 L591.8,427.2 L592.4,426.9 L593.1,426.5 L593.7,426.2 L594.4,425.9 L595.0,425.6 L595.7,425.3 L596.4,425.0 L597.0,424.7 L597.7,424.4 L598.3,424.1 L599.0,423.7 L599.7,423.4 L600.3,423.1 L601.0,422.8 L601.7,422.5 L602.4,422.2 L603.0,421.9 L603.7,421.6 L604.4,421.3 L605.0,421.0 L605.7,420.8 L606.3,420.5 L606.9,420.2 L607.6,419.9 L608.2,419.6 L608.9,419.3 L609.5,419.0 L610.2,418.7 L610.9,418.4 L611.5,418.2 L612.2,417.9 L612.9,417.6 L613.5,417.3 L614.2,417.0 L614.9,416.7 L615.6,416.4 L616.2,416.1 L616.9,415.8 L617.6,415.5 L618.2,415.2 L618.9,415.0 L619.6,414.7 L620.2,414.4 L620.9,414.1 L621.5,413.9 L622.2,413.6 L622.8,413.4 L623.5,413.1 L624.1,412.9 L624.7,412.6 L625.4,412.4 L626.0,412.1 L626.6,411.9 L627.2,411.7 L627.8,411.5 L628.6,411.2 L629.3,411.0 L630.0,410.7 L630.8,410.5 L631.5,410.3 L632.2,410.1 L632.9,409.8 L633.6,409.6 L634.3,409.4 L635.0,409.2 L635.6,409.1 L636.3,408.9 L637.0,408.7 L637.7,408.5 L638.3,408.4 L639.0,408.2 L639.7,408.0 L640.3,407.9 L641.0,407.7 L641.7,407.6 L642.4,407.5 L643.1,407.3 L643.7,407.2 L644.4,407.1 L645.1,407.0 L645.9,406.8 L646.6,406.7 L647.3,406.6 L648.0,406.5 L648.7,406.4 L649.5,406.3 L650.2,406.2 L651.0,406.1 L651.8,406.1 L652.6,406.0 L653.5,405.9 L654.3,405.9 L655.1,405.8 L656.0,405.8 L656.8,405.7 L657.6,405.7 L658.4,405.6 L659.3,405.6 L660.1,405.6 L660.9,405.5 L661.7,405.5 L662.4,405.5 L663.2,405.4 L663.9,405.4 L664.6,405.4 L665.2,405.4 L665.8,405.3 L666.4,405.3 L667.0,405.3 L667.5,405.3 L668.0,405.2 L668.4,405.2 L668.8,405.2" stroke="#8c8c8c" stroke-width="1.0" fill="none" stroke-linejoin="round"/>
<path d="M141.4,452.5 L141.6,452.2 L141.9,451.9 L142.3,451.5 L142.6,451.0 L143.0,450.6 L143.4,450.1 L143.9,449.5 L144.4,449.0 L144.9,448.4 L145.4,447.8 L145.9,447.2 L146.4,446.5 L146.9,445.9 L147.4,445.2 L147.9,444.5 L148.3,443.9 L148.8,443.2 L149.2,442.5 L149.5,441.9 L149.9,441.4 L150.2,440.8 L150.5,440.2 L150.9,439.6 L151.2,438.9 L151.5,438.3 L151.8,437.6 L152.2,437.0 L152.5,436.3 L152.8,435.7 L153.1,435.0 L153.4,434.3 L153.7,433.6 L154.1,433.0 L154.4,432.3 L154.7,431.6 L155.0,430.9 L155.3,430.3 L155.7,429.6 L156.0,428.9 L156.3,428.3 L156.6,427.7 L156.9,427.0 L157.3,426.3 L157.6,425.7 L157.9,425.0 L158.2,424.4 L158.5,423.7 L158.8,423.0 L159.1,422.4 L159.4,421.7 L159.8,421.0 L160.1,420.4 L160.4,419.7 L160.7,419.1 L161.0,418.4 L161.4,417.8 L161.7,417.1 L162.0,416.5 L162.4,415.9 L162.7,415.3 L163.0,414.7 L163.4,414.1 L163.8,413.5 L164.2,412.8 L164.6,412.2 L165.0,411.6 L165.4,411.0 L165.9,410.3 L166.3,409.7 L166.7,409.1 L167.2,408.5 L167.6,408.0 L168.1,407.4 L168.5,406.8 L168.9,406.3 L169.4,405.7 L169.8,405.2 L170.3,404.7 L170.7,404.2 L171.1,403.7 L171.6,403.2 L172.0,402.7 L172.6,402.1 L173.1,401.5 L173.7,401.0 L174.3,400.5 L174.8,400.0 L175.4,399.6 L176.0,399.1 L176.5,398.7 L177.1,398.2 L177.7,397.8 L178.2,397.4 L178.8,397.0 L179.4,396.5 L179.9,396.1 L180.5,395.6 L181.0,395.2 L181.6,394.7 L182.1,394.3 L182.7,393.8 L183.3,393.4 L183.8,393.0 L184.4,392.5 L185.0,392.1 L185.5,391.6 L186.1,391.2 L186.6,390.7 L187.2,390.3 L187.7,389.8 L188.2,389.4 L188.6,388.9 L189.1,388.4 L189.6,387.8 L190.0,387.2 L190.5,386.6 L190.9,386.0 L191.3,385.4 L191.6,384.8 L192.0,384.1 L192.3,383.5 L192.7,382.9 L193.1,382.3 L193.4,381.7 L193.8,381.1 L194.3,380.5 L194.7,379.9 L195.2,379.3 L195.6,378.8 L196.1,378.3 L196.6,377.8 L197.2,377.3 L197.7,376.8 L198.2,376.3 L198.7,375.8 L199.3,375.3 L199.8,374.8 L200.3,374.3 L200.9,373.8 L201.4,373.3 L201.9,372.8 L202.4,372.3 L202.9,371.8 L203.4,371.3 L203.9,370.7 L204.3,370.2 L204.8,369.7 L205.3,369.2 L205.8,368.6 L206.3,368.1 L206.8,367.6 L207.3,367.1 L207.8,366.6 L208.4,366.2 L209.0,365.7 L209.5,365.3 L210.1,364.9 L210.7,364.5 L211.4,364.1 L212.0,363.7 L212.7,363.3 L213.3,362.9 L214.0,362.6 L214.6,362.2 L215.3,361.8 L216.0,361.5 L216.6,361.2 L217.2,360.9 L217.8,360.6 L218.4,360.3 L218.9,360.0 L219.7,359.6 L220.4,359.2 L221.1,358.9 L221.8,358.6 L222.4,358.4 L223.0,358.1 L223.6,357.9 L224.2,357.7 L224.9,357.6 L225.5,357.4 L226.2,357.2 L226.9,357.1 L227.6,357.0 L228.3,356.9 L229.0,356.8 L229.7,356.8 L230.5,356.8 L231.2,356.9 L232.0,357.0 L232.6,357.1 L233.3,357.3 L233.9,357.5 L234.6,357.8 L235.3,358.1 L236.0,358.3 L236.8,358.6 L237.4,358.9 L238.1,359.2 L238.8,359.5 L239.4,359.8 L240.0,360.0 L240.8,360.3 L241.6,360.4 L242.3,360.5 L243.0,360.7 L243.7,360.8 L244.3,361.1 L245.0,361.5 L245.7,362.1 L246.1,362.5 L246.5,362.9 L246.8,363.4 L247.2,363.9 L247.6,364.5 L248.0,365.0 L248.4,365.6 L248.7,366.3 L249.1,366.9 L249.5,367.6 L249.9,368.3 L250.3,369.0 L250.6,369.8 L251.0,370.5 L251.4,371.3 L251.7,371.9 L251.9,372.5 L252.2,373.1 L252.5,373.7 L252.7,374.3 L253.0,375.0 L253.2,375.6 L253.5,376.3 L253.8,377.0 L254.0,377.7 L254.3,378.4 L254.6,379.1 L254.8,379.8 L255.1,380.5 L255.4,381.3 L255.6,382.0 L255.9,382.7 L256.2,383.4 L256.5,384.2 L256.8,384.9 L257.1,385.6 L257.4,386.2 L257.6,386.9 L257.9,387.5 L258.2,388.1 L258.5,388.8 L258.8,389.4 L259.1,390.1 L259.4,390.7 L259.7,391.4 L260.0,392.0 L260.3,392.7 L260.6,393.3 L260.9,394.0 L261.2,394.6 L261.5,395.3 L261.8,395.9 L262.1,396.6 L262.4,397.3 L262.7,397.9 L263.0,398.6 L263.3,399.2 L263.6,399.9 L263.9,400.5 L264.2,401.2 L264.5,401.9 L264.8,402.5 L265.1,403.2 L265.4,403.9 L265.7,404.5 L266.0,405.2 L266.3,405.9 L266.6,406.6 L266.9,407.3 L267.2,408.0 L267.5,408.6 L267.8,409.3 L268.0,410.0 L268.3,410.7 L268.6,411.3 L268.9,412.0 L269.2,412.6 L269.5,413.3 L269.8,413.9 L270.1,414.5 L270.4,415.1 L270.7,415.7 L271.0,416.3 L271.3,416.9 L271.7,417.6 L272.0,418.3 L272.4,419.0 L272.8,419.7 L273.1,420.4 L273.5,421.0 L273.9,421.7 L274.2,422.3 L274.6,423.0 L274.9,423.6 L275.3,424.2 L275.7,424.7 L276.1,425.3 L276.4,425.8 L276.8,426.4 L277.2,426.9 L277.6,427.3 L278.0,427.8 L278.4,428.2 L279.0,428.8 L279.6,429.3 L280.3,429.8 L281.0,430.2 L281.6,430.6 L282.3,431.0 L283.0,431.3 L283.7,431.6 L284.3,431.8 L285.0,432.0 L285.6,432.2 L286.3,432.4 L286.9,432.5 L287.7,432.6 L288.4,432.7 L289.2,432.7 L289.9,432.6 L290.6,432.5 L291.3,432.3 L292.0,432.1 L292.7,431.8 L293.4,431.5 L294.1,431.1 L294.6,430.8 L295.1,430.4 L295.6,430.0 L296.1,429.6 L296.6,429.1 L297.1,428.6 L297.7,428.1 L298.2,427.5 L298.7,427.0 L299.2,426.4 L299.7,425.8 L300.2,425.2 L300.7,424.6 L301.2,424.0 L301.6,423.5 L302.0,423.0 L302.4,422.4 L302.8,421.9 L303.2,421.4 L303.6,420.8 L304.1,420.2 L304.5,419.6 L304.9,419.1 L305.3,418.5 L305.7,417.9 L306.1,417.2 L306.5,416.6 L307.0,416.0 L307.4,415.3 L307.8,414.7 L308.3,414.0 L308.7,413.4 L309.1,412.9 L309.4,412.3 L309.8,411.7 L310.2,411.0 L310.6,410.4 L311.0,409.7 L311.4,409.1 L311.8,408.4 L312.3,407.7 L312.7,407.1 L313.1,406.4 L313.5,405.8 L313.9,405.1 L314.3,404.5 L314.7,403.9 L315.2,403.3 L315.6,402.8 L316.0,402.2 L316.4,401.7 L316.8,401.2 L317.4,400.6 L317.9,399.9 L318.5,399.4 L319.1,398.8 L319.6,398.3 L320.2,397.8 L320.8,397.3 L321.3,396.9 L321.9,396.4 L322.5,396.0 L323.0,395.6 L323.6,395.2 L324.2,394.8 L324.7,394.5 L325.3,394.1 L326.0,393.7 L326.6,393.3 L327.3,393.0 L328.0,392.7 L328.7,392.4 L329.4,392.1 L330.1,391.8 L330.8,391.6 L331.4,391.4 L332.1,391.1 L332.7,390.9 L333.3,390.7 L333.9,390.5 L334.6,390.2 L335.2,389.9 L335.7,389.7 L336.1,389.4 L336.6,389.2 L337.1,389.0 L337.9,388.9 L338.8,388.7 L340.0,388.6 L340.5,388.6 L341.0,388.5 L341.6,388.5 L342.2,388.5 L342.8,388.5 L343.4,388.4 L344.1,388.4 L344.8,388.4 L345.5,388.4 L346.2,388.4 L346.9,388.4 L347.7,388.4 L348.5,388.4 L349.2,388.4 L350.0,388.4 L350.8,388.4 L351.6,388.4 L352.4,388.4 L353.2,388.4 L354.0,388.4 L354.8,388.4 L355.6,388.4 L356.3,388.4 L357.1,388.4 L357.9,388.4 L358.6,388.4 L359.3,388.4 L360.0,388.4 L360.7,388.3 L361.4,388.3 L362.2,388.3 L362.9,388.3 L363.6,388.2 L364.3,388.2 L365.0,388.2 L365.8,388.1 L366.5,388.1 L367.2,388.1 L367.9,388.0 L368.7,388.0 L369.4,388.0 L370.1,387.9 L370.8,387.9 L371.6,387.9 L372.3,387.9 L373.0,387.9 L373.7,387.8 L374.5,387.8 L375.2,387.8 L375.9,387.8 L376.7,387.8 L377.4,387.8 L378.1,387.8 L378.8,387.8 L379.5,387.8 L380.2,387.8 L380.9,387.8 L381.6,387.8 L382.4,387.8 L383.1,387.8 L383.8,387.8 L384.5,387.8 L385.3,387.9 L386.0,387.9 L386.7,387.9 L387.4,387.9 L388.1,387.9 L388.9,388.0 L389.6,388.0 L390.3,388.0 L391.0,388.1 L391.7,388.1 L392.4,388.1 L393.1,388.2 L393.8,388.3 L394.4,388.3 L395.1,388.4 L395.8,388.5 L396.4,388.6 L397.1,388.7 L397.7,388.8 L398.5,388.9 L399.2,389.1 L399.9,389.3 L400.6,389.4 L401.3,389.6 L402.0,389.8 L402.6,390.0 L403.3,390.2 L403.9,390.4 L404.6,390.6 L405.2,390.8 L405.8,391.1 L406.5,391.3 L407.1,391.6 L407.7,391.8 L408.4,392.1 L409.1,392.4 L409.7,392.7 L410.4,392.9 L411.1,393.2 L411.8,393.6 L412.5,393.9 L413.3,394.2 L413.9,394.4 L414.4,394.7 L415.0,395.0 L415.6,395.2 L416.2,395.5 L416.8,395.8 L417.4,396.1 L418.1,396.4 L418.7,396.7 L419.3,397.0 L419.9,397.3 L420.6,397.6 L421.2,398.0 L421.8,398.3 L422.5,398.6 L423.1,398.9 L423.8,399.3 L424.4,399.6 L425.1,399.9 L425.7,400.3 L426.4,400.6 L427.0,401.0 L427.7,401.3 L428.3,401.6 L429.0,402.0 L429.6,402.3 L430.3,402.7 L430.9,403.0 L431.5,403.3 L432.2,403.7 L432.8,404.0 L433.4,404.3 L434.1,404.7 L434.7,405.0 L435.3,405.4 L435.9,405.7 L436.6,406.0 L437.2,406.4 L437.8,406.7 L438.5,407.1 L439.1,407.5 L439.7,407.8 L440.3,408.2 L441.0,408.5 L441.6,408.9 L442.2,409.2 L442.9,409.6 L443.5,409.9 L444.1,410.3 L444.7,410.7 L445.4,411.0 L446.0,411.4 L446.6,411.7 L447.3,412.1 L447.9,412.4 L448.5,412.7 L449.1,413.1 L449.8,413.4 L450.4,413.7 L451.0,414.1 L451.7,414.4 L452.3,414.7 L452.9,415.0 L453.6,415.3 L454.2,415.7 L454.9,416.0 L455.5,416.3 L456.2,416.6 L456.8,416.9 L457.4,417.2 L458.1,417.6 L458.7,417.9 L459.3,418.2 L460.0,418.5 L460.6,418.8 L461.2,419.1 L461.9,419.4 L462.5,419.7 L463.2,419.9 L463.8,420.2 L464.5,420.5 L465.1,420.8 L465.8,421.1 L466.4,421.4 L467.1,421.6 L467.8,421.9 L468.4,422.2 L469.1,422.5 L469.8,422.7 L470.5,423.0 L471.2,423.2 L471.9,423.5 L472.5,423.7 L473.2,423.9 L473.8,424.2 L474.5,424.4 L475.1,424.6 L475.8,424.8 L476.5,425.1 L477.2,425.3 L477.9,425.5 L478.5,425.7 L479.2,425.9 L479.9,426.1 L480.6,426.4 L481.3,426.6 L482.0,426.8 L482.8,427.0 L483.5,427.2 L484.2,427.4 L484.9,427.6 L485.6,427.8 L486.3,427.9 L487.0,428.1 L487.7,428.3 L488.4,428.5 L489.1,428.7 L489.7,428.8 L490.4,429.0 L491.1,429.2 L491.8,429.3 L492.4,429.5 L493.1,429.6 L493.7,429.7 L494.4,429.9 L495.0,430.0 L495.8,430.1 L496.5,430.3 L497.3,430.4 L498.0,430.5 L498.7,430.6 L499.5,430.7 L500.2,430.8 L500.9,430.9 L501.7,431.0 L502.4,431.0 L503.1,431.1 L503.8,431.2 L504.5,431.2 L505.2,431.3 L505.9,431.3 L506.6,431.4 L507.3,431.4 L508.0,431.5 L508.6,431.5 L509.3,431.6 L510.0,431.6 L510.6,431.7 L511.3,431.7 L511.9,431.8 L512.6,431.8 L513.2,431.9 L513.9,431.9 L514.5,432.0 L515.3,432.1 L516.1,432.2 L516.8,432.3 L517.5,432.4 L518.3,432.5 L519.0,432.7 L519.6,432.8 L520.3,432.9 L521.0,433.0 L521.7,433.1 L522.4,433.2 L523.0,433.4 L523.7,433.5 L524.4,433.6 L525.1,433.7 L525.7,433.7 L526.4,433.8 L527.2,433.9 L527.9,433.9 L528.6,434.0 L529.4,434.0 L530.2,434.0 L530.8,434.0 L531.5,434.0 L532.2,434.0 L532.8,433.9 L533.5,433.9 L534.2,433.8 L534.9,433.8 L535.7,433.7 L536.4,433.7 L537.1,433.6 L537.9,433.5 L538.6,433.4 L539.3,433.3 L540.1,433.2 L540.8,433.2 L541.5,433.1 L542.3,433.0 L543.0,432.9 L543.7,432.8 L544.4,432.7 L545.1,432.6 L545.8,432.5 L546.5,432.4 L547.2,432.3 L547.8,432.2 L548.5,432.2 L549.1,432.1 L549.7,432.0 L550.6,431.9 L551.4,431.8 L552.1,431.7 L552.9,431.7 L553.6,431.6 L554.3,431.5 L554.9,431.5 L555.6,431.4 L556.2,431.3 L556.9,431.3 L557.5,431.2 L558.2,431.1 L558.8,431.0 L559.5,430.9 L560.2,430.7 L561.0,430.6 L561.7,430.4 L562.5,430.2 L563.4,430.0 L564.0,429.8 L564.6,429.7 L565.2,429.5 L565.8,429.3 L566.4,429.1 L567.0,428.9 L567.7,428.7 L568.3,428.5 L569.0,428.2 L569.6,428.0 L570.3,427.8 L571.0,427.5 L571.6,427.3 L572.3,427.0 L573.0,426.8 L573.7,426.5 L574.4,426.3 L575.1,426.0 L575.8,425.7 L576.5,425.5 L577.2,425.2 L577.9,424.9 L578.6,424.7 L579.3,424.4 L580.1,424.2 L580.8,423.9 L581.5,423.7 L582.2,423.4 L582.9,423.2 L583.5,423.0 L584.2,422.8 L584.8,422.6 L585.5,422.4 L586.1,422.1 L586.8,421.9 L587.4,421.7 L588.1,421.5 L588.7,421.3 L589.4,421.1 L590.1,420.9 L590.7,420.7 L591.4,420.4 L592.1,420.2 L592.7,420.0 L593.4,419.8 L594.1,419.6 L594.8,419.4 L595.4,419.2 L596.1,419.0 L596.8,418.7 L597.5,418.5 L598.2,418.3 L598.8,418.1 L599.5,417.9 L600.2,417.7 L600.9,417.5 L601.6,417.3 L602.3,417.0 L603.0,416.8 L603.7,416.6 L604.4,416.4 L605.1,416.2 L605.7,416.0 L606.4,415.8 L607.1,415.6 L607.8,415.4 L608.5,415.2 L609.2,414.9 L609.9,414.7 L610.6,414.5 L611.3,414.3 L612.0,414.1 L612.7,413.9 L613.4,413.7 L614.1,413.4 L614.8,413.2 L615.5,413.0 L616.2,412.8 L616.9,412.6 L617.6,412.4 L618.3,412.2 L619.1,412.0 L619.8,411.7 L620.5,411.5 L621.1,411.3 L621.8,411.1 L622.5,410.9 L623.2,410.8 L623.9,410.6 L624.5,410.4 L625.2,410.2 L625.9,410.0 L626.5,409.8 L627.2,409.7 L627.8,409.5 L628.6,409.3 L629.3,409.1 L630.0,408.9 L630.8,408.8 L631.5,408.6 L632.2,408.4 L632.9,408.2 L633.6,408.1 L634.3,407.9 L635.0,407.8 L635.6,407.6 L636.3,407.5 L637.0,407.3 L637.7,407.2 L638.3,407.1 L639.0,406.9 L639.7,406.8 L640.3,406.6 L641.0,406.5 L641.7,406.4 L642.4,406.2 L643.1,406.1 L643.7,405.9 L644.4,405.8 L645.1,405.7 L645.9,405.5 L646.6,405.4 L647.3,405.2 L648.0,405.1 L648.7,404.9 L649.4,404.8 L650.1,404.6 L650.9,404.4 L651.7,404.3 L652.4,404.1 L653.2,403.9 L654.0,403.8 L654.8,403.6 L655.7,403.4 L656.5,403.3 L657.3,403.1 L658.1,402.9 L658.9,402.8 L659.7,402.6 L660.4,402.4 L661.2,402.3 L661.9,402.1 L662.7,402.0 L663.4,401.8 L664.1,401.7 L664.7,401.5 L665.4,401.4 L666.0,401.3 L666.5,401.2 L667.1,401.1 L667.6,401.0 L668.0,400.9 L668.4,400.8 L668.8,400.7" stroke="#22eef5" stroke-width="1.1" fill="none" stroke-linejoin="round"/>
<path d="M141.4,448.2 L141.7,447.9 L142.0,447.7 L142.5,447.4 L142.9,447.0 L143.4,446.5 L144.0,445.9 L144.5,445.0 L145.0,443.9 L145.2,443.5 L145.3,443.0 L145.5,442.5 L145.7,441.9 L145.9,441.4 L146.1,440.8 L146.2,440.2 L146.4,439.5 L146.6,438.9 L146.8,438.2 L147.0,437.5 L147.1,436.8 L147.3,436.1 L147.5,435.4 L147.7,434.6 L147.9,433.8 L148.1,433.1 L148.3,432.3 L148.5,431.5 L148.6,430.7 L148.8,429.9 L149.0,429.1 L149.2,428.3 L149.3,427.7 L149.5,427.1 L149.6,426.5 L149.7,425.9 L149.9,425.2 L150.0,424.6 L150.2,423.9 L150.3,423.3 L150.4,422.6 L150.6,422.0 L150.7,421.3 L150.9,420.6 L151.0,420.0 L151.1,419.3 L151.3,418.6 L151.4,417.9 L151.6,417.2 L151.7,416.5 L151.8,415.8 L152.0,415.0 L152.1,414.3 L152.2,413.6 L152.4,412.9 L152.5,412.1 L152.7,411.4 L152.8,410.7 L152.9,409.9 L153.1,409.2 L153.2,408.4 L153.4,407.7 L153.5,406.9 L153.6,406.3 L153.7,405.6 L153.8,405.0 L154.0,404.3 L154.1,403.6 L154.2,402.9 L154.3,402.3 L154.4,401.6 L154.5,400.9 L154.7,400.2 L154.8,399.5 L154.9,398.8 L155.0,398.0 L155.1,397.3 L155.2,396.6 L155.4,395.9 L155.5,395.2 L155.6,394.5 L155.7,393.7 L155.8,393.0 L155.9,392.3 L156.1,391.6 L156.2,390.9 L156.3,390.1 L156.4,389.4 L156.5,388.7 L156.6,388.0 L156.8,387.3 L156.9,386.6 L157.0,385.9 L157.1,385.3 L157.2,384.6 L157.3,383.9 L157.5,383.2 L157.6,382.6 L157.7,381.9 L157.8,381.3 L157.9,380.6 L158.1,379.8 L158.2,379.1 L158.3,378.4 L158.4,377.7 L158.6,377.1 L158.7,376.4 L158.8,375.8 L158.9,375.1 L159.0,374.5 L159.2,373.9 L159.3,373.3 L159.4,372.7 L159.5,372.0 L159.6,371.4 L159.7,370.8 L159.9,370.2 L160.0,369.5 L160.1,368.9 L160.2,368.2 L160.4,367.6 L160.5,366.9 L160.7,366.2 L160.8,365.5 L161.0,364.8 L161.1,364.0 L161.3,363.3 L161.5,362.5 L161.6,361.7 L161.8,360.9 L162.0,360.0 L162.1,359.4 L162.3,358.8 L162.4,358.2 L162.5,357.6 L162.7,357.0 L162.8,356.4 L162.9,355.7 L163.1,355.0 L163.2,354.4 L163.4,353.7 L163.5,353.0 L163.7,352.3 L163.8,351.6 L164.0,350.8 L164.1,350.1 L164.3,349.4 L164.5,348.7 L164.6,347.9 L164.8,347.2 L164.9,346.4 L165.1,345.7 L165.3,344.9 L165.4,344.2 L165.6,343.4 L165.8,342.7 L166.0,341.9 L166.1,341.2 L166.3,340.4 L166.5,339.7 L166.6,339.0 L166.8,338.2 L167.0,337.5 L167.2,336.8 L167.3,336.1 L167.5,335.4 L167.7,334.7 L167.9,334.0 L168.0,333.3 L168.2,332.6 L168.4,331.9 L168.6,331.3 L168.8,330.7 L168.9,330.0 L169.1,329.4 L169.3,328.8 L169.5,328.2 L169.6,327.7 L169.8,327.1 L170.1,326.2 L170.4,325.4 L170.6,324.6 L170.9,323.8 L171.2,323.1 L171.5,322.3 L171.8,321.6 L172.1,320.9 L172.4,320.2 L172.7,319.5 L173.0,318.9 L173.3,318.2 L173.6,317.6 L173.9,317.0 L174.2,316.4 L174.5,315.8 L174.8,315.2 L175.1,314.6 L175.4,314.0 L175.7,313.5 L176.0,312.9 L176.3,312.3 L176.6,311.7 L176.9,311.2 L177.2,310.6 L177.5,310.0 L177.8,309.4 L178.0,308.8 L178.3,308.2 L178.6,307.6 L178.9,306.9 L179.2,306.2 L179.5,305.6 L179.8,304.9 L180.1,304.2 L180.4,303.6 L180.7,302.9 L181.0,302.2 L181.3,301.6 L181.6,300.9 L181.9,300.3 L182.2,299.6 L182.5,299.0 L182.8,298.4 L183.1,297.7 L183.3,297.1 L183.6,296.4 L183.9,295.8 L184.2,295.1 L184.5,294.5 L184.8,293.9 L185.0,293.2 L185.3,292.6 L185.6,291.9 L185.9,291.3 L186.1,290.6 L186.4,290.0 L186.7,289.3 L187.0,288.6 L187.2,287.9 L187.5,287.2 L187.8,286.5 L188.0,285.8 L188.3,285.1 L188.6,284.4 L188.8,283.7 L189.1,283.0 L189.4,282.3 L189.6,281.6 L189.9,280.9 L190.1,280.2 L190.4,279.5 L190.6,278.8 L190.9,278.1 L191.2,277.4 L191.4,276.8 L191.7,276.1 L191.9,275.5 L192.2,274.9 L192.4,274.2 L192.7,273.6 L192.9,273.1 L193.2,272.5 L193.6,271.7 L193.9,271.0 L194.3,270.2 L194.6,269.6 L195.0,268.9 L195.3,268.3 L195.7,267.6 L196.0,267.0 L196.4,266.4 L196.7,265.8 L197.1,265.3 L197.5,264.7 L197.8,264.1 L198.2,263.5 L198.6,262.9 L199.0,262.3 L199.4,261.7 L199.8,261.0 L200.2,260.4 L200.5,259.8 L200.9,259.2 L201.3,258.6 L201.7,258.0 L202.1,257.4 L202.5,256.7 L202.9,256.1 L203.3,255.4 L203.7,254.8 L204.1,254.2 L204.5,253.6 L205.0,252.9 L205.4,252.3 L205.8,251.7 L206.2,251.2 L206.7,250.6 L207.1,250.1 L207.5,249.6 L208.0,249.1 L208.4,248.6 L209.0,248.0 L209.5,247.5 L210.1,247.0 L210.7,246.5 L211.3,246.0 L211.8,245.6 L212.4,245.2 L213.0,244.8 L213.6,244.4 L214.2,244.0 L214.8,243.7 L215.5,243.3 L216.1,243.0 L216.7,242.7 L217.3,242.3 L218.0,242.0 L218.6,241.7 L219.3,241.4 L220.0,241.1 L220.6,240.8 L221.3,240.5 L222.0,240.2 L222.8,239.9 L223.5,239.6 L224.2,239.4 L224.9,239.1 L225.6,238.9 L226.3,238.7 L226.9,238.4 L227.6,238.3 L228.2,238.1 L228.8,237.9 L229.4,237.8 L230.3,237.6 L231.2,237.5 L232.0,237.4 L232.8,237.3 L233.6,237.3 L234.3,237.4 L235.0,237.4 L235.7,237.5 L236.4,237.7 L237.0,237.8 L237.7,238.0 L238.4,238.3 L239.0,238.6 L239.6,239.0 L240.2,239.4 L240.7,239.9 L241.3,240.4 L241.8,241.0 L242.2,241.4 L242.5,241.9 L242.9,242.3 L243.2,242.8 L243.5,243.3 L243.9,243.9 L244.2,244.5 L244.5,245.2 L244.9,245.9 L245.2,246.8 L245.6,247.7 L245.8,248.2 L246.0,248.8 L246.2,249.4 L246.4,250.0 L246.6,250.7 L246.9,251.4 L247.1,252.1 L247.3,252.8 L247.5,253.6 L247.8,254.3 L248.0,255.1 L248.2,255.9 L248.5,256.6 L248.7,257.4 L248.9,258.2 L249.1,258.9 L249.3,259.6 L249.5,260.4 L249.7,261.1 L249.9,261.7 L250.1,262.4 L250.3,263.0 L250.5,263.8 L250.7,264.5 L250.9,265.1 L251.1,265.7 L251.3,266.3 L251.4,266.8 L251.6,267.3 L251.7,267.9 L251.9,268.4 L252.0,269.0 L252.2,269.6 L252.4,270.3 L252.6,271.1 L252.7,272.0 L253.0,272.9 L253.2,274.0 L253.3,274.5 L253.4,275.1 L253.5,275.6 L253.7,276.2 L253.8,276.8 L253.9,277.5 L254.1,278.1 L254.2,278.8 L254.3,279.5 L254.5,280.2 L254.6,280.9 L254.8,281.6 L254.9,282.4 L255.0,283.1 L255.2,283.9 L255.3,284.6 L255.5,285.4 L255.6,286.2 L255.8,287.0 L255.9,287.8 L256.1,288.5 L256.2,289.3 L256.4,290.1 L256.5,290.9 L256.7,291.6 L256.8,292.4 L257.0,293.2 L257.1,293.9 L257.3,294.6 L257.4,295.4 L257.5,296.1 L257.7,296.8 L257.8,297.5 L257.9,298.1 L258.1,298.8 L258.2,299.4 L258.4,300.2 L258.5,301.0 L258.7,301.7 L258.8,302.5 L259.0,303.2 L259.1,303.8 L259.3,304.5 L259.4,305.1 L259.5,305.8 L259.7,306.4 L259.8,307.0 L259.9,307.6 L260.1,308.3 L260.2,308.9 L260.3,309.5 L260.5,310.1 L260.6,310.8 L260.7,311.4 L260.9,312.1 L261.0,312.8 L261.1,313.5 L261.3,314.3 L261.4,315.1 L261.6,315.9 L261.7,316.7 L261.9,317.6 L262.0,318.5 L262.1,319.1 L262.2,319.7 L262.3,320.3 L262.4,320.9 L262.5,321.5 L262.5,322.2 L262.6,322.9 L262.7,323.5 L262.8,324.2 L262.9,324.9 L263.0,325.7 L263.1,326.4 L263.2,327.1 L263.3,327.9 L263.4,328.6 L263.5,329.4 L263.6,330.1 L263.7,330.9 L263.7,331.7 L263.8,332.4 L263.9,333.2 L264.0,334.0 L264.1,334.8 L264.2,335.5 L264.3,336.3 L264.4,337.1 L264.5,337.8 L264.6,338.6 L264.7,339.4 L264.8,340.1 L264.9,340.8 L265.0,341.6 L265.1,342.3 L265.2,343.0 L265.3,343.7 L265.4,344.4 L265.5,345.1 L265.6,345.8 L265.7,346.4 L265.8,347.1 L265.9,347.7 L266.0,348.3 L266.1,348.9 L266.2,349.4 L266.3,350.0 L266.5,350.9 L266.7,351.9 L266.9,352.7 L267.0,353.5 L267.2,354.3 L267.4,355.1 L267.6,355.8 L267.8,356.5 L268.0,357.2 L268.1,357.8 L268.3,358.4 L268.5,359.1 L268.7,359.7 L268.9,360.3 L269.1,360.9 L269.3,361.4 L269.5,362.0 L269.7,362.6 L269.9,363.2 L270.2,363.8 L270.4,364.4 L270.6,365.1 L270.8,365.7 L271.1,366.4 L271.3,367.1 L271.5,367.7 L271.7,368.4 L272.0,369.1 L272.2,369.7 L272.4,370.4 L272.7,371.1 L272.9,371.8 L273.2,372.5 L273.4,373.2 L273.7,373.9 L273.9,374.6 L274.2,375.3 L274.5,376.1 L274.7,376.8 L275.0,377.5 L275.2,378.2 L275.5,378.8 L275.8,379.5 L276.0,380.2 L276.3,380.8 L276.6,381.5 L276.8,382.1 L277.1,382.8 L277.4,383.4 L277.6,383.9 L277.9,384.5 L278.1,385.1 L278.4,385.6 L278.8,386.4 L279.2,387.2 L279.6,388.0 L280.0,388.7 L280.4,389.5 L280.8,390.2 L281.2,390.9 L281.6,391.5 L282.0,392.2 L282.4,392.8 L282.8,393.4 L283.2,393.9 L283.6,394.4 L284.0,394.8 L284.4,395.3 L284.8,395.6 L285.1,395.9 L285.5,396.2 L286.3,396.6 L287.0,396.7 L287.7,396.6 L288.4,396.3 L289.1,395.9 L289.8,395.4 L290.5,394.8 L291.2,394.1 L291.6,393.8 L292.0,393.5 L292.4,393.2 L292.8,392.9 L293.2,392.6 L293.6,392.3 L294.0,391.9 L294.4,391.5 L294.8,390.9 L295.2,390.2 L295.6,389.3 L296.0,388.3 L296.4,387.1 L296.9,385.6 L297.0,385.2 L297.2,384.7 L297.3,384.2 L297.4,383.7 L297.5,383.2 L297.7,382.6 L297.8,382.1 L297.9,381.5 L298.1,380.9 L298.2,380.3 L298.3,379.7 L298.5,379.1 L298.6,378.4 L298.7,377.7 L298.9,377.1 L299.0,376.4 L299.1,375.7 L299.3,375.0 L299.4,374.3 L299.6,373.5 L299.7,372.8 L299.8,372.1 L300.0,371.3 L300.1,370.5 L300.3,369.8 L300.4,369.0 L300.5,368.2 L300.7,367.5 L300.8,366.7 L301.0,365.9 L301.1,365.1 L301.3,364.3 L301.4,363.5 L301.5,362.8 L301.7,362.0 L301.8,361.2 L302.0,360.4 L302.1,359.6 L302.3,358.8 L302.4,358.1 L302.6,357.3 L302.7,356.5 L302.8,355.8 L303.0,355.0 L303.1,354.3 L303.3,353.5 L303.4,352.8 L303.6,352.1 L303.7,351.4 L303.9,350.7 L304.0,350.0 L304.2,349.3 L304.3,348.6 L304.5,347.9 L304.6,347.1 L304.8,346.4 L304.9,345.7 L305.1,345.0 L305.2,344.3 L305.4,343.6 L305.5,342.9 L305.7,342.1 L305.9,341.4 L306.0,340.7 L306.2,340.0 L306.3,339.3 L306.5,338.6 L306.7,337.9 L306.8,337.2 L307.0,336.4 L307.1,335.7 L307.3,335.0 L307.5,334.3 L307.6,333.6 L307.8,332.9 L307.9,332.2 L308.1,331.5 L308.2,330.8 L308.4,330.1 L308.6,329.4 L308.7,328.7 L308.9,328.0 L309.0,327.3 L309.2,326.6 L309.4,325.9 L309.5,325.2 L309.7,324.6 L309.8,323.9 L310.0,323.2 L310.1,322.5 L310.3,321.8 L310.4,321.2 L310.6,320.5 L310.7,319.8 L310.9,319.2 L311.0,318.5 L311.2,317.9 L311.3,317.2 L311.5,316.5 L311.6,315.9 L311.8,315.1 L311.9,314.4 L312.1,313.6 L312.3,312.9 L312.4,312.1 L312.6,311.4 L312.7,310.6 L312.9,309.8 L313.0,309.1 L313.2,308.3 L313.3,307.6 L313.5,306.8 L313.6,306.1 L313.8,305.3 L313.9,304.6 L314.1,303.8 L314.2,303.1 L314.4,302.4 L314.5,301.6 L314.7,300.9 L314.8,300.2 L315.0,299.5 L315.1,298.8 L315.3,298.1 L315.4,297.4 L315.6,296.7 L315.7,296.0 L315.8,295.3 L316.0,294.6 L316.1,294.0 L316.3,293.3 L316.4,292.7 L316.6,292.0 L316.7,291.4 L316.9,290.8 L317.0,290.2 L317.2,289.6 L317.3,289.0 L317.5,288.4 L317.6,287.8 L317.7,287.2 L317.9,286.7 L318.2,285.8 L318.4,284.9 L318.7,284.1 L318.9,283.2 L319.2,282.4 L319.5,281.7 L319.8,280.9 L320.0,280.2 L320.3,279.5 L320.6,278.8 L320.9,278.1 L321.1,277.4 L321.4,276.8 L321.7,276.2 L321.9,275.6 L322.2,275.0 L322.5,274.4 L322.7,273.8 L323.0,273.3 L323.2,272.7 L323.4,272.2 L323.7,271.7 L323.9,271.2 L324.1,270.7 L324.3,270.2 L324.7,269.3 L325.0,268.4 L325.2,267.7 L325.4,267.1 L325.5,266.5 L325.7,266.0 L325.9,265.5 L326.1,265.0 L326.4,264.4 L326.8,263.9 L327.2,263.2 L327.8,262.5 L328.2,262.1 L328.5,261.6 L329.0,261.2 L329.4,260.7 L329.9,260.2 L330.3,259.7 L330.8,259.3 L331.4,258.8 L331.9,258.2 L332.5,257.7 L333.0,257.2 L333.6,256.7 L334.2,256.2 L334.8,255.7 L335.3,255.2 L335.9,254.7 L336.5,254.2 L337.1,253.7 L337.7,253.2 L338.3,252.7 L338.9,252.2 L339.5,251.8 L340.1,251.4 L340.6,251.0 L341.2,250.6 L341.8,250.1 L342.3,249.7 L342.9,249.3 L343.5,248.9 L344.1,248.6 L344.7,248.2 L345.3,247.8 L345.9,247.4 L346.5,247.0 L347.1,246.7 L347.7,246.3 L348.4,245.9 L349.0,245.5 L349.6,245.2 L350.2,244.8 L350.8,244.4 L351.4,244.1 L352.0,243.7 L352.6,243.4 L353.2,243.0 L353.8,242.6 L354.5,242.3 L355.1,241.9 L355.7,241.5 L356.4,241.2 L357.0,240.8 L357.6,240.4 L358.3,240.1 L358.9,239.7 L359.5,239.4 L360.2,239.0 L360.8,238.7 L361.4,238.3 L362.1,238.0 L362.7,237.7 L363.3,237.3 L363.9,237.0 L364.5,236.6 L365.1,236.3 L365.7,235.9 L366.3,235.6 L366.9,235.2 L367.5,234.8 L368.2,234.4 L368.8,234.0 L369.4,233.5 L370.0,233.1 L370.6,232.7 L371.2,232.2 L371.8,231.8 L372.4,231.3 L373.0,230.9 L373.6,230.5 L374.2,230.1 L374.7,229.7 L375.3,229.3 L375.9,228.9 L376.4,228.5 L377.0,228.2 L377.5,227.9 L378.1,227.6 L378.6,227.3 L379.4,227.0 L380.1,226.7 L380.8,226.4 L381.5,226.2 L382.2,226.0 L382.9,225.8 L383.6,225.7 L384.3,225.6 L385.0,225.5 L385.7,225.4 L386.3,225.3 L387.0,225.2 L387.7,225.1 L388.4,225.0 L389.2,224.9 L389.9,224.8 L390.7,224.7 L391.5,224.6 L392.2,224.6 L393.0,224.5 L393.8,224.5 L394.5,224.4 L395.3,224.4 L396.0,224.4 L396.7,224.4 L397.4,224.4 L398.1,224.4 L398.9,224.4 L399.6,224.4 L400.3,224.3 L400.9,224.3 L401.5,224.3 L402.2,224.3 L402.8,224.4 L403.5,224.5 L404.3,224.7 L405.0,225.0 L405.9,225.4 L406.4,225.6 L406.9,225.9 L407.4,226.2 L407.9,226.5 L408.4,226.9 L409.0,227.2 L409.5,227.6 L410.1,228.0 L410.7,228.4 L411.3,228.8 L411.8,229.3 L412.4,229.7 L413.0,230.2 L413.6,230.7 L414.2,231.2 L414.8,231.7 L415.4,232.2 L416.0,232.7 L416.6,233.2 L417.1,233.7 L417.7,234.2 L418.2,234.7 L418.7,235.1 L419.2,235.6 L419.7,236.0 L420.1,236.5 L420.6,237.0 L421.1,237.5 L421.6,238.0 L422.1,238.5 L422.6,239.0 L423.1,239.5 L423.6,240.0 L424.0,240.5 L424.5,241.1 L425.0,241.6 L425.5,242.2 L426.0,242.7 L426.5,243.3 L427.0,243.9 L427.5,244.5 L427.9,245.1 L428.4,245.7 L428.9,246.3 L429.4,246.9 L429.8,247.4 L430.2,247.9 L430.6,248.5 L431.0,249.0 L431.4,249.6 L431.8,250.2 L432.2,250.7 L432.6,251.3 L433.0,251.9 L433.4,252.5 L433.8,253.1 L434.2,253.7 L434.6,254.4 L435.0,255.0 L435.4,255.6 L435.8,256.2 L436.2,256.8 L436.6,257.4 L437.0,258.1 L437.3,258.7 L437.7,259.3 L438.1,259.9 L438.5,260.5 L438.9,261.1 L439.3,261.7 L439.6,262.3 L440.0,262.8 L440.4,263.4 L440.7,264.0 L441.1,264.5 L441.5,265.2 L442.0,265.8 L442.4,266.5 L442.8,267.1 L443.2,267.7 L443.7,268.4 L444.1,269.0 L444.5,269.6 L444.9,270.2 L445.3,270.8 L445.7,271.4 L446.1,272.0 L446.4,272.6 L446.8,273.2 L447.2,273.7 L447.6,274.3 L448.0,274.9 L448.4,275.5 L448.8,276.1 L449.2,276.7 L449.6,277.2 L450.0,277.8 L450.4,278.4 L450.8,279.0 L451.2,279.6 L451.6,280.2 L452.0,280.8 L452.5,281.4 L452.9,281.9 L453.3,282.5 L453.7,283.1 L454.1,283.7 L454.6,284.3 L455.0,284.8 L455.4,285.4 L455.8,286.0 L456.2,286.6 L456.7,287.1 L457.1,287.7 L457.5,288.3 L457.9,288.9 L458.4,289.4 L458.8,290.0 L459.2,290.6 L459.6,291.2 L460.1,291.7 L460.5,292.3 L460.9,292.9 L461.3,293.5 L461.7,294.1 L462.2,294.7 L462.6,295.3 L463.0,295.9 L463.4,296.5 L463.9,297.1 L464.3,297.7 L464.7,298.3 L465.1,298.9 L465.6,299.5 L466.0,300.1 L466.4,300.7 L466.9,301.2 L467.3,301.8 L467.7,302.4 L468.1,303.0 L468.6,303.6 L469.0,304.2 L469.4,304.7 L469.8,305.3 L470.3,305.8 L470.7,306.4 L471.1,306.9 L471.6,307.5 L472.1,308.1 L472.5,308.7 L473.0,309.3 L473.5,309.8 L474.0,310.4 L474.5,310.9 L475.0,311.5 L475.4,312.0 L475.9,312.6 L476.4,313.1 L476.9,313.6 L477.3,314.2 L477.8,314.7 L478.3,315.2 L478.8,315.7 L479.3,316.2 L479.8,316.8 L480.2,317.3 L480.7,317.8 L481.2,318.3 L481.7,318.8 L482.2,319.4 L482.7,319.9 L483.2,320.5 L483.7,321.0 L484.3,321.5 L484.8,322.1 L485.3,322.6 L485.8,323.1 L486.3,323.6 L486.8,324.2 L487.3,324.7 L487.8,325.2 L488.3,325.7 L488.8,326.2 L489.4,326.6 L489.9,327.1 L490.4,327.6 L490.9,328.1 L491.4,328.5 L492.0,329.0 L492.5,329.5 L493.1,330.0 L493.6,330.4 L494.2,330.9 L494.7,331.3 L495.3,331.8 L495.8,332.2 L496.3,332.7 L496.9,333.1 L497.5,333.5 L498.0,333.9 L498.6,334.3 L499.2,334.7 L499.8,335.0 L500.4,335.4 L501.0,335.8 L501.6,336.1 L502.2,336.4 L502.8,336.7 L503.5,337.0 L504.2,337.3 L504.8,337.6 L505.5,337.9 L506.2,338.2 L506.9,338.5 L507.6,338.7 L508.3,339.0 L509.0,339.2 L509.7,339.4 L510.4,339.6 L511.1,339.8 L511.8,340.0 L512.4,340.2 L513.1,340.3 L513.7,340.4 L514.3,340.5 L515.1,340.6 L515.9,340.6 L516.6,340.7 L517.4,340.6 L518.1,340.6 L518.8,340.5 L519.5,340.4 L520.2,340.3 L520.9,340.1 L521.6,340.0 L522.3,339.8 L523.0,339.6 L523.7,339.5 L524.4,339.3 L525.1,339.1 L525.8,338.9 L526.5,338.7 L527.1,338.5 L527.8,338.3 L528.5,338.1 L529.1,337.9 L529.8,337.6 L530.5,337.3 L531.2,337.0 L531.9,336.7 L532.6,336.4 L533.3,336.1 L534.1,335.7 L534.7,335.4 L535.2,335.1 L535.8,334.8 L536.4,334.5 L537.0,334.2 L537.6,333.9 L538.3,333.6 L538.9,333.3 L539.5,332.9 L540.1,332.6 L540.8,332.2 L541.4,331.8 L542.0,331.4 L542.7,331.0 L543.3,330.6 L543.9,330.2 L544.6,329.7 L545.2,329.3 L545.8,328.8 L546.3,328.4 L546.8,328.0 L547.3,327.5 L547.8,327.1 L548.3,326.6 L548.9,326.1 L549.4,325.6 L549.9,325.1 L550.4,324.6 L550.9,324.0 L551.4,323.5 L551.9,323.0 L552.4,322.4 L552.9,321.9 L553.4,321.4 L553.9,320.8 L554.4,320.3 L555.0,319.7 L555.5,319.2 L556.0,318.7 L556.5,318.1 L557.0,317.6 L557.5,317.1 L558.0,316.6 L558.5,316.1 L559.0,315.6 L559.5,315.1 L560.0,314.7 L560.6,314.2 L561.1,313.7 L561.6,313.3 L562.1,312.8 L562.6,312.3 L563.1,311.9 L563.6,311.4 L564.1,310.9 L564.6,310.4 L565.1,309.9 L565.6,309.4 L566.1,308.9 L566.7,308.3 L567.2,307.8 L567.7,307.2 L568.2,306.6 L568.7,306.0 L569.2,305.4 L569.6,304.9 L570.0,304.4 L570.4,303.9 L570.8,303.3 L571.2,302.8 L571.6,302.2 L572.0,301.6 L572.4,301.0 L572.8,300.4 L573.2,299.8 L573.7,299.2 L574.1,298.5 L574.5,297.9 L574.9,297.3 L575.3,296.7 L575.7,296.0 L576.1,295.4 L576.5,294.8 L576.9,294.1 L577.3,293.5 L577.7,292.9 L578.1,292.3 L578.4,291.7 L578.8,291.1 L579.2,290.5 L579.5,289.9 L579.9,289.4 L580.2,288.8 L580.6,288.3 L580.9,287.8 L581.3,287.1 L581.8,286.5 L582.2,285.8 L582.5,285.3 L582.9,284.7 L583.2,284.2 L583.5,283.7 L583.8,283.2 L584.1,282.7 L584.5,282.2 L584.8,281.7 L585.1,281.2 L585.4,280.7 L585.7,280.2 L586.1,279.6 L586.5,279.0 L586.9,278.3 L587.3,277.6 L587.8,276.9 L588.3,276.1 L588.8,275.2 L589.1,274.7 L589.4,274.3 L589.7,273.8 L590.0,273.3 L590.3,272.8 L590.6,272.2 L591.0,271.7 L591.3,271.1 L591.6,270.6 L592.0,270.0 L592.3,269.4 L592.7,268.8 L593.1,268.2 L593.4,267.6 L593.8,267.0 L594.2,266.4 L594.6,265.7 L594.9,265.1 L595.3,264.5 L595.7,263.8 L596.1,263.2 L596.5,262.5 L596.9,261.9 L597.3,261.2 L597.7,260.6 L598.1,259.9 L598.5,259.2 L598.9,258.6 L599.3,257.9 L599.7,257.3 L600.1,256.6 L600.5,256.0 L600.9,255.3 L601.3,254.7 L601.7,254.1 L602.1,253.4 L602.5,252.8 L602.9,252.2 L603.3,251.6 L603.6,251.0 L604.0,250.4 L604.4,249.8 L604.8,249.2 L605.2,248.6 L605.6,248.0 L606.0,247.3 L606.4,246.7 L606.8,246.1 L607.2,245.5 L607.6,244.8 L608.0,244.2 L608.4,243.6 L608.8,243.0 L609.3,242.3 L609.7,241.7 L610.1,241.1 L610.5,240.5 L610.9,239.8 L611.3,239.2 L611.7,238.6 L612.2,238.0 L612.6,237.4 L613.0,236.8 L613.4,236.2 L613.8,235.6 L614.2,235.0 L614.6,234.4 L615.0,233.8 L615.4,233.2 L615.7,232.6 L616.1,232.1 L616.5,231.5 L616.9,231.0 L617.3,230.4 L617.6,229.9 L618.0,229.4 L618.3,228.8 L618.7,228.3 L619.0,227.8 L619.4,227.3 L619.7,226.9 L620.0,226.4 L620.5,225.6 L621.0,224.9 L621.5,224.2 L621.9,223.6 L622.4,222.9 L622.8,222.3 L623.2,221.8 L623.6,221.2 L624.0,220.6 L624.4,220.1 L624.8,219.6 L625.1,219.1 L625.5,218.6 L625.9,218.1 L626.2,217.6 L626.6,217.0 L627.0,216.5 L627.4,216.0 L627.7,215.5 L628.1,215.0 L628.5,214.4 L628.9,213.9 L629.4,213.3 L629.8,212.7 L630.2,212.2 L630.6,211.6 L631.0,211.0 L631.4,210.5 L631.8,209.9 L632.3,209.3 L632.7,208.7 L633.1,208.1 L633.6,207.5 L634.0,206.9 L634.4,206.3 L634.9,205.7 L635.3,205.1 L635.8,204.5 L636.2,203.9 L636.6,203.3 L637.1,202.7 L637.5,202.2 L638.0,201.6 L638.4,201.0 L638.9,200.4 L639.3,199.8 L639.7,199.3 L640.2,198.7 L640.6,198.2 L641.1,197.6 L641.5,197.1 L642.0,196.5 L642.5,195.9 L643.0,195.3 L643.5,194.7 L644.0,194.1 L644.5,193.6 L645.1,193.0 L645.6,192.4 L646.1,191.8 L646.6,191.3 L647.1,190.7 L647.7,190.1 L648.2,189.6 L648.7,189.1 L649.2,188.5 L649.7,188.0 L650.1,187.5 L650.6,187.0 L651.1,186.5 L651.5,186.1 L652.0,185.6 L652.4,185.2 L652.8,184.8 L653.2,184.4 L653.9,183.7 L654.6,183.0 L655.2,182.4 L655.8,181.9 L656.4,181.4 L656.9,181.0 L657.4,180.6 L657.9,180.2 L658.4,179.8 L658.9,179.4 L659.4,179.0 L660.0,178.6 L660.6,178.1 L661.3,177.6 L662.0,177.1 L662.7,176.7 L663.4,176.2 L664.1,175.7 L664.8,175.3 L665.4,174.9 L665.9,174.6 L666.5,174.3 L666.9,174.1 L668.3,174.1 L668.8,174.6" stroke="#fbc234" stroke-width="1.15" fill="none" stroke-linejoin="round"/>
<path d="M152.4,443.5 L153.0,441.2 L153.7,439.3 L154.5,435.5 L155.1,433.5 L155.7,430.4 L156.5,428.2 L157.1,424.7 L157.7,421.8 L158.3,419.8 L159.0,416.4 L159.6,413.9 L160.3,410.6 L161.0,408.5 L161.7,405.3 L162.5,402.8 L163.2,400.1 L164.0,396.7 L164.7,394.8 L165.6,391.7 L166.4,389.1 L167.2,386.1 L168.1,383.3 L169.1,381.7 L170.6,378.5 L172.3,376.8 L174.0,374.5 L175.5,372.0 L176.7,368.7 L177.9,366.3 L179.3,363.8 L181.0,361.5 L183.4,358.4 L185.7,357.4 L188.2,357.6 L189.3,355.5 L189.8,352.3 L190.2,349.1 L190.8,346.6 L191.9,342.4 L193.9,340.6 L196.5,340.0 L199.3,338.1 L200.7,336.9 L202.3,333.6 L204.9,333.2 L208.1,332.8 L210.8,333.5 L212.5,330.5 L213.8,330.8 L214.4,332.9 L214.9,335.4 L216.4,336.0 L217.2,332.6 L218.1,330.6 L219.8,330.3 L221.0,334.0 L222.6,333.8 L223.9,330.6 L226.1,332.2 L228.3,333.6 L229.5,330.7 L231.0,329.0 L232.4,331.7 L234.4,332.9 L237.1,331.0 L239.8,328.9 L242.3,331.4 L244.1,332.8 L246.8,334.0 L248.0,336.1 L249.4,339.3 L250.9,341.4 L253.0,342.5 L253.8,346.3 L254.4,348.6 L255.1,352.5 L255.7,354.9 L256.4,357.5 L257.3,360.8 L259.1,362.4 L260.2,365.1 L261.3,369.2 L262.3,372.1 L263.3,373.7 L264.3,376.1 L265.2,380.5 L265.9,384.2 L266.5,385.0 L267.1,389.2 L267.6,390.8 L268.1,394.7 L268.7,397.4 L269.3,399.8 L269.8,404.1 L270.5,405.9 L271.8,408.7 L274.1,410.5 L276.5,411.1 L277.6,413.5 L278.4,416.4 L279.2,420.7 L279.9,422.8 L280.6,426.8 L281.7,429.5 L282.9,430.7 L285.0,434.1 L287.6,434.4 L290.5,431.3 L293.6,434.0 L295.9,434.3 L296.7,438.2 L298.2,438.2 L299.5,436.6 L300.7,432.5 L302.9,432.2 L305.6,429.6 L307.8,429.4 L309.5,426.1 L311.3,425.7 L312.8,421.0 L313.9,418.8 L314.9,417.7 L315.9,412.8 L317.0,411.8 L318.1,408.9 L319.2,405.3 L320.3,404.6 L321.4,400.2 L322.5,398.7 L323.3,394.2 L324.0,392.9 L324.7,388.8 L325.4,387.3 L326.0,382.9 L326.7,381.0 L327.4,377.0 L328.1,375.4 L328.8,371.3 L329.6,369.4 L330.3,366.5 L331.0,363.3 L331.7,360.4 L332.6,356.3 L333.7,355.1 L336.1,352.7 L337.9,350.8 L338.7,348.5 L339.3,346.4 L340.1,342.8 L341.5,341.4 L343.8,340.1 L345.7,337.6 L347.0,335.2 L348.4,331.2 L349.9,329.9 L351.6,326.5 L353.5,324.4 L355.6,322.8 L357.6,320.0 L359.8,318.0 L362.2,315.9 L364.5,314.2 L366.6,313.6 L368.6,310.5 L370.5,309.5 L372.5,306.7 L374.5,306.2 L376.5,302.6 L378.4,301.7 L380.4,298.7 L382.1,296.4 L383.7,294.8 L385.1,291.4 L386.5,289.4 L387.9,285.1 L389.3,284.0 L391.3,280.6 L394.2,282.1 L397.0,280.0 L400.0,280.6 L402.4,279.3 L404.9,274.9 L407.6,277.1 L410.4,275.1 L413.3,276.0 L416.3,278.1 L419.3,276.4 L422.2,278.4 L424.6,277.9 L427.0,280.9 L429.2,281.7 L431.0,285.6 L432.5,287.2 L433.9,290.8 L436.4,289.6 L439.4,288.6 L441.5,291.9 L443.3,293.9 L445.2,295.2 L447.1,299.0 L449.1,301.0 L451.1,302.0 L452.9,305.7 L454.7,306.5 L456.3,310.5 L457.7,311.3 L459.7,313.4 L462.2,316.5 L464.5,318.1 L467.1,319.1 L469.1,322.8 L470.3,324.8 L472.1,327.9 L474.4,327.0 L476.6,331.3 L478.0,331.5 L479.5,335.5 L481.2,337.9 L483.2,338.9 L485.5,340.3 L487.8,344.0 L489.9,344.1 L491.8,347.7 L493.7,350.2 L495.6,351.2 L497.8,352.4 L500.4,355.9 L502.8,354.9 L504.7,359.3 L506.5,361.0 L508.3,362.5 L509.9,365.5 L511.3,370.1 L512.8,371.8 L515.3,372.0 L517.9,368.9 L520.4,370.4 L523.0,369.0 L525.4,374.0 L528.0,374.7 L530.4,375.4 L532.9,379.1 L535.9,378.3 L538.8,380.2 L541.3,381.4 L544.1,382.7 L546.4,382.5 L549.3,384.8 L551.9,384.2 L554.6,382.6" stroke="#3b3be0" stroke-width="1.1" fill="none"/>
<path d="M222.3,290.5 L222.3,267.0 L223.0,273.1 L224.6,266.9 L226.2,264.6 L227.8,280.2 L229.3,272.4 L230.8,280.5 L232.3,282.8 L233.6,267.1 L235.0,281.0 L236.3,281.6 L237.6,281.6 L239.0,280.3 L240.5,273.3 L241.8,283.3 L243.1,274.5 L244.6,286.3 L246.0,285.1 L247.4,280.2 L248.5,290.4 L249.6,279.3 L250.7,288.0 L251.8,289.0 L252.7,288.5 L253.6,290.9 L254.4,286.2 L255.0,296.6 L255.4,286.6 L255.7,296.0 L256.0,287.3 L256.3,295.4 L256.6,296.6 L257.0,297.9 L257.4,293.0 L257.9,297.2 L258.4,303.1 L259.0,306.5 L259.5,308.8 L260.0,303.4 L260.5,315.9 L261.1,307.1 L261.8,315.3 L262.5,309.2 L263.2,314.5 L263.9,318.0 L264.6,309.7 L265.0,316.6 L265.4,314.8 L265.7,320.9 L266.1,322.0 L266.5,318.3 L266.8,321.4 L267.2,324.0 L267.6,332.5 L268.0,327.1 L268.4,334.7 L268.9,336.9 L269.5,334.0 L270.1,333.9 L270.7,343.6 L271.2,335.1 L271.8,341.8 L272.3,338.2 L272.8,344.5 L273.3,342.5 L273.7,348.8 L274.0,343.3 L274.3,346.5 L274.7,352.2 L275.2,348.7 L276.0,352.1 L277.2,347.7 L278.5,356.9 L279.8,356.0 L281.0,357.4 L282.6,351.0 L284.1,354.6 L285.6,352.8 L287.0,353.4 L288.5,353.8 L289.9,356.8 L291.1,350.9 L291.7,347.6 L292.2,353.7 L292.7,347.1 L293.2,347.4 L293.8,349.4 L294.3,344.4 L294.9,347.7 L295.5,341.7 L296.1,340.0 L296.7,341.6 L297.3,344.3 L297.9,338.0 L298.5,338.4 L299.1,335.6 L299.7,337.1 L300.2,332.0 L300.7,335.2 L301.1,333.6 L301.6,327.4 L302.1,329.0 L302.6,326.2 L303.1,323.3 L303.6,327.0 L304.3,320.8 L305.0,320.5 L305.8,319.6 L306.6,322.1 L307.4,321.7 L308.2,314.8 L309.0,315.1 L309.6,317.8 L310.3,309.8 L311.0,315.3 L311.6,306.3 L312.3,310.2 L312.9,305.6 L313.5,305.4 L314.1,307.7 L314.7,303.9 L315.1,307.2 L315.6,305.8 L316.0,298.1 L316.5,301.8 L317.0,295.2 L317.6,300.2 L318.5,294.2 L319.8,297.2 L321.3,296.8 L322.8,296.4 L324.3,294.2 L325.6,290.3 L326.9,293.7 L328.2,291.6 L329.4,287.7 L330.6,287.5 L331.6,288.4 L332.4,284.1 L333.3,284.8 L334.7,287.9 L335.7,284.5 L337.1,289.3 L338.3,287.1 L339.5,282.3 L340.8,285.2 L342.1,281.0 L343.6,283.3 L345.0,284.1 L346.4,278.9 L347.9,282.6 L349.3,278.6 L350.6,282.1 L352.0,276.8 L353.4,281.5 L354.8,276.0 L356.3,281.8 L357.7,276.1 L359.1,282.4 L360.5,278.0 L361.9,281.7 L363.4,276.4 L364.8,276.2 L366.2,281.8 L367.6,281.9 L369.0,277.1 L370.4,280.3 L371.9,278.0 L373.3,282.0 L374.7,277.1 L376.1,282.4 L377.5,276.3 L379.0,280.7 L380.4,276.6 L381.8,280.9 L383.2,276.7 L384.7,279.6 L386.2,277.5 L387.7,280.1 L389.2,277.9 L390.7,281.9 L392.1,277.2 L393.6,282.6 L395.0,279.0 L396.3,277.6 L397.5,281.9 L399.0,281.1 L400.6,277.2 L402.1,282.1 L403.4,278.7 L404.7,281.4 L406.0,277.4 L407.2,276.7 L408.4,283.7 L409.5,282.5 L410.5,282.7 L411.6,282.1 L412.6,286.7 L413.6,287.9 L414.6,283.6 L415.6,284.3 L416.7,288.2 L417.8,289.3 L418.9,285.8 L420.1,292.7 L421.2,286.8 L422.3,291.8 L423.4,288.4 L424.5,295.6 L425.7,290.7 L426.8,299.7 L427.9,293.8 L429.0,298.1 L430.2,294.6 L431.3,299.1 L432.4,301.3 L433.5,298.4 L434.6,303.5 L435.8,299.2 L436.9,301.8 L438.0,306.7 L439.1,303.3 L440.3,309.4 L441.5,304.5 L442.7,304.1 L443.9,308.9 L445.1,304.3 L446.3,312.8 L447.5,308.0 L448.6,314.0 L449.7,309.1 L450.8,314.2 L451.9,317.3 L453.0,318.1 L454.1,317.4 L455.2,312.8 L456.3,314.2 L457.3,314.9 L458.3,317.7 L459.4,322.2 L460.4,321.3 L461.5,321.3 L462.5,326.7 L463.6,323.4 L464.8,324.7 L465.9,323.1 L467.1,329.0 L468.2,326.3 L469.3,330.5 L470.3,331.4 L471.7,331.5 L473.0,329.7 L474.3,332.6 L475.8,329.9 L477.1,328.5 L478.1,333.8 L479.1,332.5 L480.2,339.2 L481.3,335.4 L482.4,340.1 L483.6,341.5 L484.8,336.6 L486.0,343.4 L487.4,337.5 L488.8,342.7 L490.3,337.6 L491.8,338.5 L493.3,344.0 L494.8,340.4 L496.2,345.5 L497.5,343.6 L498.7,340.1 L499.9,344.5 L501.0,347.1 L502.2,340.2 L503.3,348.2 L504.5,343.9 L505.7,351.2 L506.9,345.5 L508.1,351.5 L509.3,349.0 L510.6,350.1 L511.9,354.2 L513.2,354.1 L514.5,352.6 L515.8,353.1 L517.2,350.7 L518.5,354.0 L519.9,355.8 L521.3,353.3 L522.8,356.3 L524.2,358.4 L525.7,350.5 L527.1,353.9 L528.5,353.7 L529.8,351.1 L531.3,355.3 L532.7,347.1 L534.0,352.3 L535.3,343.7 L536.7,345.7 L538.2,348.2 L539.7,352.7 L541.2,351.5 L542.4,347.7 L543.7,355.2 L545.1,348.6 L546.5,357.0 L548.0,347.7 L549.4,353.9 L550.9,356.6 L552.3,353.4 L553.7,347.0 L555.0,353.3 L556.3,346.6 L557.4,352.1 L558.5,345.5 L559.6,343.6 L560.7,350.2 L561.7,339.3 L562.7,345.5 L563.8,344.5 L564.8,336.7 L565.8,342.9 L566.7,334.7 L567.7,334.1 L568.7,337.3 L569.9,330.6 L571.3,338.6 L572.7,330.1 L574.1,336.3 L575.5,335.7 L576.8,328.9 L578.2,334.2 L579.5,330.2 L580.9,330.5 L582.2,328.5 L583.6,337.1 L585.0,336.7 L586.4,335.0 L587.7,333.8 L589.1,324.5 L590.3,325.3 L591.6,330.1 L592.7,324.0 L594.1,330.5 L595.3,319.4 L596.3,320.6 L597.4,324.2 L598.5,324.0 L599.8,317.4 L601.1,324.8 L602.5,317.4 L603.9,324.0 L605.3,316.4 L606.9,322.8 L608.4,311.3 L610.0,315.9 L611.5,320.3 L612.9,322.4 L614.2,314.5 L615.5,321.1 L616.8,317.2 L618.1,324.0 L619.4,312.2 L620.7,320.7 L622.0,320.0 L623.3,315.0 L624.6,316.7 L626.0,308.2 L627.3,313.2 L628.7,307.2 L630.1,313.4 L631.5,303.7 L632.8,313.8 L634.2,311.6 L635.6,307.4 L637.1,317.6 L638.6,305.9 L640.2,317.8 L641.7,315.7 L643.2,303.1 L644.6,315.4 L646.0,303.2 L647.3,313.0 L648.6,306.0 L649.8,303.5 L650.9,300.7 L652.0,308.9 L653.0,297.5 L653.9,305.4 L654.8,295.6 L655.9,301.5 L657.1,293.1 L658.0,299.4 L658.7,293.8 L660.0,287.0 L660.0,322.0" stroke="#d42a2a" stroke-width="1.05" fill="none"/>
<path d="M222.3,303.0 L222.3,276.6 L223.0,293.2 L224.5,313.2 L225.9,302.9 L227.5,310.0 L229.1,303.9 L230.6,314.4 L232.0,304.9 L233.4,296.5 L234.8,306.4 L236.1,297.3 L237.3,318.4 L238.4,297.2 L239.8,318.4 L241.2,310.2 L242.6,308.9 L244.0,297.0 L245.3,306.0 L246.7,312.4 L248.1,298.0 L249.4,318.0 L250.6,300.1 L251.8,310.9 L252.9,306.5 L253.9,311.2 L254.7,304.9 L255.2,320.4 L255.7,306.8 L256.1,312.3 L256.6,322.9 L257.1,323.2 L257.6,313.9 L258.2,312.9 L258.7,312.2 L259.3,327.8 L259.9,314.0 L260.5,330.3 L261.1,320.0 L261.8,336.1 L262.4,337.1 L262.9,326.7 L263.5,336.2 L264.0,323.8 L264.5,339.7 L265.1,341.4 L265.6,333.9 L266.0,345.6 L266.5,334.6 L267.0,350.2 L267.6,347.3 L268.3,339.3 L268.9,352.0 L269.6,351.6 L270.3,341.4 L271.0,349.0 L271.8,344.8 L272.7,344.2 L273.6,356.9 L274.5,350.1 L275.5,358.2 L276.4,344.8 L277.6,349.2 L278.9,358.3 L280.2,351.4 L281.6,351.4 L283.0,360.9 L284.5,353.1 L286.2,361.5 L287.7,354.4 L289.2,361.7 L290.2,352.3 L290.9,362.8 L291.5,359.2 L292.0,357.3 L292.6,347.9 L293.3,347.1 L293.9,344.7 L294.6,346.4 L295.5,341.3 L296.4,342.7 L297.3,347.1 L298.3,337.6 L299.3,340.3 L300.2,333.5 L301.1,341.9 L301.9,340.5 L302.6,333.1 L303.3,345.4 L304.0,339.5 L304.6,338.7 L305.2,330.1 L305.8,337.0 L306.5,326.1 L307.3,333.1 L308.0,325.1 L308.8,332.3 L309.5,320.8 L310.3,330.3 L311.2,325.2 L312.1,319.1 L313.3,317.4 L314.5,322.4 L315.7,314.8 L316.9,324.7 L317.9,314.6 L318.6,317.8 L319.3,309.5 L319.8,313.8 L320.3,307.0 L320.9,311.3 L321.7,302.8 L322.6,300.6 L323.6,302.2 L324.7,307.9 L325.9,306.8 L327.0,295.6 L328.1,303.8 L329.2,303.7 L330.1,297.3 L331.1,299.4 L332.2,293.1 L333.6,300.7 L334.9,292.5 L336.0,297.7 L337.2,291.2 L338.4,291.7 L339.7,298.0 L341.1,290.9 L342.5,296.0 L344.0,288.0 L345.6,289.9 L347.3,288.5 L348.4,292.5 L349.6,294.4 L350.9,293.3 L352.2,284.4 L353.5,284.3 L354.8,284.8 L356.2,290.6 L357.6,280.3 L359.0,288.8 L360.4,276.7 L361.8,287.4 L363.1,278.2 L364.4,287.0 L365.7,277.9 L366.9,284.7 L368.5,286.2 L369.9,283.1 L371.3,279.9 L372.7,283.5 L374.0,279.7 L375.4,284.8 L376.7,287.1 L378.1,282.8 L379.5,280.9 L381.0,285.5 L382.5,288.9 L383.9,280.7 L385.3,286.3 L386.8,287.2 L388.4,280.0 L390.0,282.2 L391.6,280.3 L393.3,281.7 L394.8,284.0 L396.4,279.9 L397.8,280.0 L399.2,280.5 L400.4,289.5 L401.5,280.8 L403.3,286.8 L404.9,278.7 L406.0,278.1 L407.3,277.6 L408.5,285.5 L409.4,277.0 L410.4,285.6 L411.4,281.0 L412.5,290.3 L413.5,292.8 L414.6,287.1 L415.6,292.5 L416.7,285.2 L417.8,295.3 L418.9,289.5 L420.0,290.5 L421.2,292.0 L422.3,298.4 L423.4,298.2 L424.5,298.6 L425.7,299.1 L426.8,292.4 L427.9,300.0 L429.0,299.2 L430.2,298.2 L431.3,305.1 L432.4,306.5 L433.5,302.2 L434.6,309.6 L435.8,306.6 L436.9,303.7 L438.0,312.5 L439.1,312.8 L440.3,306.2 L441.5,314.3 L442.7,309.7 L443.9,308.3 L445.1,310.0 L446.3,319.2 L447.5,311.7 L448.6,310.2 L449.7,315.1 L450.8,314.9 L451.9,325.7 L453.0,316.8 L454.1,316.8 L455.2,322.5 L456.3,317.4 L457.3,317.5 L458.3,325.9 L459.4,327.5 L460.4,328.4 L461.5,319.5 L462.5,329.8 L463.6,329.4 L464.8,322.2 L465.9,330.5 L467.1,321.1 L468.2,329.2 L469.3,334.0 L470.3,328.3 L471.7,333.6 L473.0,330.2 L474.3,334.0 L475.8,330.7 L477.1,336.6 L478.1,336.6 L479.1,338.8 L480.2,335.2 L481.3,345.6 L482.4,338.2 L483.6,348.1 L484.8,341.8 L486.0,347.6 L487.4,341.0 L488.8,344.6 L490.3,338.4 L491.8,339.1 L493.3,342.3 L494.8,351.9 L496.2,337.4 L497.5,348.6 L498.7,351.0 L499.9,342.9 L501.0,351.3 L502.2,350.1 L503.3,344.6 L504.5,345.7 L505.7,352.4 L506.9,354.3 L508.1,347.8 L509.3,357.4 L510.6,351.5 L511.9,362.2 L513.2,352.3 L514.5,360.6 L515.8,354.0 L517.2,359.3 L518.5,363.2 L519.9,353.4 L521.3,357.3 L522.8,348.1 L524.2,357.1 L525.7,348.8 L527.1,345.9 L528.5,354.5 L529.8,346.2 L531.3,354.6 L532.7,355.3 L534.0,347.2 L535.3,354.8 L536.7,347.8 L538.2,352.7 L539.7,353.0 L541.2,363.5 L542.4,360.6 L543.7,362.4 L545.1,360.4 L546.5,348.9 L548.0,355.3 L549.4,349.8 L550.9,349.4 L552.3,355.5 L553.7,349.9 L555.0,347.9 L556.3,349.1 L557.5,355.0 L558.6,345.8 L559.8,354.9 L560.9,348.1 L561.9,339.4 L563.0,348.6 L564.1,331.9 L565.1,343.6 L566.1,333.5 L567.2,339.6 L568.2,328.1 L569.2,338.5 L570.7,333.1 L572.2,332.8 L573.7,335.2 L575.1,346.8 L576.6,335.9 L578.0,336.7 L579.4,336.6 L580.9,349.2 L582.2,335.7 L583.6,343.0 L585.0,335.6 L586.4,344.5 L587.7,333.5 L589.1,333.7 L590.3,340.3 L591.6,340.4 L592.7,327.4 L594.0,338.2 L595.1,317.4 L596.1,332.4 L597.1,320.5 L598.1,331.4 L599.2,325.8 L600.5,322.3 L601.8,331.8 L603.2,319.0 L604.6,334.8 L606.1,331.0 L607.6,327.0 L609.2,343.0 L610.7,337.6 L612.2,322.9 L613.5,336.1 L614.8,326.8 L616.1,334.1 L617.4,329.6 L618.7,329.7 L620.0,318.6 L621.3,330.4 L622.6,329.9 L623.9,313.9 L625.3,319.0 L626.7,313.7 L628.0,320.0 L629.4,312.9 L630.8,324.1 L632.2,311.1 L633.5,323.7 L634.9,309.5 L636.3,320.7 L637.9,309.0 L639.5,319.3 L641.0,306.9 L642.6,311.2 L644.1,321.6 L645.5,309.2 L646.7,322.0 L647.8,319.9 L648.8,309.6 L649.6,317.2 L650.3,308.8 L650.9,320.5 L651.6,304.7 L652.2,317.0 L652.8,303.3 L653.8,297.7 L655.1,307.0 L656.5,308.7 L657.7,298.6 L658.7,302.8 L660.0,317.0 L660.0,269.0" stroke="#2626e6" stroke-width="1.05" fill="none"/>
</svg>
<div class="t" style="left:-289.40px;width:400px;text-align:right;top:508.44px;font:normal 10px/10px 'Liberation Sans';color:#555;">0</div>
<div class="t" style="left:-289.40px;width:400px;text-align:right;top:485.37px;font:normal 10px/10px 'Liberation Sans';color:#555;">0.025</div>
<div class="t" style="left:-289.40px;width:400px;text-align:right;top:462.31px;font:normal 10px/10px 'Liberation Sans';color:#555;">0.05</div>
<div class="t" style="left:-289.40px;width:400px;text-align:right;top:439.25px;font:normal 10px/10px 'Liberation Sans';color:#555;">0.075</div>
<div class="t" style="left:-289.40px;width:400px;text-align:right;top:416.19px;font:normal 10px/10px 'Liberation Sans';color:#555;">0.1</div>
<div class="t" style="left:-289.40px;width:400px;text-align:right;top:393.12px;font:normal 10px/10px 'Liberation Sans';color:#555;">0.125</div>
<div class="t" style="left:-289.40px;width:400px;text-align:right;top:370.06px;font:normal 10px/10px 'Liberation Sans';color:#555;">0.15</div>
<div class="t" style="left:-289.40px;width:400px;text-align:right;top:347.00px;font:normal 10px/10px 'Liberation Sans';color:#555;">0.175</div>
<div class="t" style="left:-289.40px;width:400px;text-align:right;top:323.94px;font:normal 10px/10px 'Liberation Sans';color:#555;">0.2</div>
<div class="t" style="left:-289.40px;width:400px;text-align:right;top:300.87px;font:normal 10px/10px 'Liberation Sans';color:#555;">0.225</div>
<div class="t" style="left:-289.40px;width:400px;text-align:right;top:277.81px;font:normal 10px/10px 'Liberation Sans';color:#555;">0.25</div>
<div class="t" style="left:-289.40px;width:400px;text-align:right;top:254.75px;font:normal 10px/10px 'Liberation Sans';color:#555;">0.275</div>
<div class="t" style="left:-289.40px;width:400px;text-align:right;top:231.68px;font:normal 10px/10px 'Liberation Sans';color:#555;">0.3</div>
<div class="t" style="left:-289.40px;width:400px;text-align:right;top:208.62px;font:normal 10px/10px 'Liberation Sans';color:#555;">0.325</div>
<div class="t" style="left:-289.40px;width:400px;text-align:right;top:185.56px;font:normal 10px/10px 'Liberation Sans';color:#555;">0.35</div>
<div class="t" style="left:-289.40px;width:400px;text-align:right;top:162.50px;font:normal 10px/10px 'Liberation Sans';color:#555;">0.375</div>
<div class="t" style="left:-289.40px;width:400px;text-align:right;top:139.44px;font:normal 10px/10px 'Liberation Sans';color:#555;">0.4</div>
<div class="t" style="left:-69.50px;width:400px;text-align:center;top:524.13px;font:normal 10px/10px 'Liberation Sans';color:#555;">0.25</div>
<div class="t" style="left:-12.50px;width:400px;text-align:center;top:524.13px;font:normal 10px/10px 'Liberation Sans';color:#555;">0.5</div>
<div class="t" style="left:44.50px;width:400px;text-align:center;top:524.13px;font:normal 10px/10px 'Liberation Sans';color:#555;">0.75</div>
<div class="t" style="left:102.50px;width:400px;text-align:center;top:524.13px;font:normal 10px/10px 'Liberation Sans';color:#555;">1</div>
<div class="t" style="left:159.50px;width:400px;text-align:center;top:524.13px;font:normal 10px/10px 'Liberation Sans';color:#555;">1.25</div>
<div class="t" style="left:217.50px;width:400px;text-align:center;top:524.13px;font:normal 10px/10px 'Liberation Sans';color:#555;">1.5</div>
<div class="t" style="left:274.50px;width:400px;text-align:center;top:524.13px;font:normal 10px/10px 'Liberation Sans';color:#555;">1.75</div>
<div class="t" style="left:331.50px;width:400px;text-align:center;top:524.13px;font:normal 10px/10px 'Liberation Sans';color:#555;">2</div>
<div class="t" style="left:389.50px;width:400px;text-align:center;top:524.13px;font:normal 10px/10px 'Liberation Sans';color:#555;">2.25</div>
<div class="t" style="left:446.50px;width:400px;text-align:center;top:524.13px;font:normal 10px/10px 'Liberation Sans';color:#555;">2.5</div>
<div class="t" style="left:-59.50px;width:400px;text-align:center;top:119.03px;font:normal 10px/10px 'Liberation Sans';color:#555;">1.000E6</div>
<div class="t" style="left:0.50px;width:400px;text-align:center;top:119.03px;font:normal 10px/10px 'Liberation Sans';color:#555;">900000</div>
<div class="t" style="left:60.50px;width:400px;text-align:center;top:119.03px;font:normal 10px/10px 'Liberation Sans';color:#555;">800000</div>
<div class="t" style="left:119.50px;width:400px;text-align:center;top:119.03px;font:normal 10px/10px 'Liberation Sans';color:#555;">700000</div>
<div class="t" style="left:179.50px;width:400px;text-align:center;top:119.03px;font:normal 10px/10px 'Liberation Sans';color:#555;">600000</div>
<div class="t" style="left:239.50px;width:400px;text-align:center;top:119.03px;font:normal 10px/10px 'Liberation Sans';color:#555;">500000</div>
<div class="t" style="left:299.50px;width:400px;text-align:center;top:119.03px;font:normal 10px/10px 'Liberation Sans';color:#555;">400000</div>
<div class="t" style="left:358.50px;width:400px;text-align:center;top:119.03px;font:normal 10px/10px 'Liberation Sans';color:#555;">300000</div>
<div class="t" style="left:418.50px;width:400px;text-align:center;top:119.03px;font:normal 10px/10px 'Liberation Sans';color:#555;">200000</div>
<div class="t" style="left:478.50px;width:400px;text-align:center;top:119.03px;font:normal 10px/10px 'Liberation Sans';color:#555;">100000</div>
<div class="t" style="left:205.50px;width:400px;text-align:center;top:102.73px;font:normal 13.2px/13.2px 'Liberation Serif';color:#3a3a3a;-webkit-text-stroke:0.35px #3a3a3a">Frequency [GHz]</div>
<div class="t" style="left:205.70px;width:400px;text-align:center;top:535.43px;font:normal 13.2px/13.2px 'Liberation Serif';color:#3a3a3a;-webkit-text-stroke:0.35px #3a3a3a">Wavelength [µm]</div>
<div class="t" style="left:76px;top:326px;width:0;height:0"><div style="position:absolute;left:-100px;top:-7px;width:200px;text-align:center;font:normal 13.2px/14px 'Liberation Serif';color:#3a3a3a;-webkit-text-stroke:0.35px #3a3a3a;transform:rotate(-90deg)">reflectance</div></div>
<div class="t" style="left:320.50px;width:400px;text-align:right;top:553.96px;font:bold 9.5px/9.5px 'Liberation Sans';color:#333;">Reference frequency: 557306492.44</div>
<div class="a" style="left:42px;top:583px;width:683px;height:1px;background:#8da7d6;"></div>
<div class="a" style="left:43px;top:584px;width:681px;height:1px;background:#d3e1f3;"></div>
<div class="a" style="left:723px;top:584px;width:1px;height:59px;background:#d3e1f3;"></div>
<div class="a" style="left:724px;top:583px;width:1px;height:61px;background:#8da7d6;"></div>
<div class="a" style="left:43px;top:641px;width:681px;height:1px;background:#d3e1f3;"></div>
<div class="a" style="left:42px;top:642px;width:683px;height:1px;background:#8da7d6;"></div>
<div class="a" style="left:42px;top:643px;width:940px;height:1px;background:#d6e0ef;"></div>
<div class="a" style="left:44px;top:569px;width:51px;height:15px;background:#c6dbf1;border:1px solid #8fa8d6;border-bottom:none;border-radius:4px 1px 0 0"></div>
<div class="a" style="left:94px;top:569px;width:50px;height:15px;background:#f0f0f0;border:1px solid #a9b6cc;border-bottom:none;border-radius:4px 1px 0 0"></div>
<div class="a" style="left:143px;top:569px;width:76px;height:15px;background:#f0f0f0;border:1px solid #a9b6cc;border-bottom:none;border-radius:4px 1px 0 0"></div>
<div class="a" style="left:44px;top:583px;width:51px;height:2px;background:#c6dbf1;"></div>
<div class="t" style="left:52.30px;top:571.93px;font:bold 9.3px/9.3px 'Liberation Sans';color:#333;">X Tools</div>
<div class="t" style="left:101.30px;top:571.93px;font:bold 9.3px/9.3px 'Liberation Sans';color:#333;">Y Tools</div>
<div class="t" style="left:150.80px;top:571.93px;font:bold 9.3px/9.3px 'Liberation Sans';color:#333;">Stack/Mosaic</div>
<div class="a" style="left:50px;top:593px;width:45px;height:25px;border:1px solid #c8c8c8;"></div>
<div class="t" style="left:54.30px;top:589.93px;font:bold 9.3px/9.3px 'Liberation Sans';color:#333;background:#eeeeee;padding:0 1px;margin-left:-1px">Shift</div>
<div class="a" style="left:99px;top:593px;width:47px;height:25px;border:1px solid #c8c8c8;"></div>
<div class="t" style="left:103.80px;top:589.93px;font:bold 9.3px/9.3px 'Liberation Sans';color:#333;background:#eeeeee;padding:0 1px;margin-left:-1px">Zoom</div>
<div class="a" style="left:149.5px;top:593px;width:57.5px;height:25px;border:1px solid #c8c8c8;"></div>
<div class="t" style="left:154.60px;top:589.93px;font:bold 9.3px/9.3px 'Liberation Sans';color:#333;background:#eeeeee;padding:0 1px;margin-left:-1px">Search</div>
<div class="a" style="left:211px;top:593px;width:59px;height:25px;border:1px solid #c8c8c8;"></div>
<div class="t" style="left:216.30px;top:589.93px;font:bold 9.3px/9.3px 'Liberation Sans';color:#333;background:#eeeeee;padding:0 1px;margin-left:-1px">Range</div>
<div class="a" style="left:52px;top:601px;width:21px;height:14.799999999999955px;border:1px solid #7d8aa0;background:linear-gradient(#fbfdff,#e3eefa 50%,#c9dcf0);border-radius:1px"></div>
<div class="t" style="left:-137.50px;width:400px;text-align:center;top:603.83px;font:normal 9.3px/9.3px 'Liberation Sans';color:#333;">&lt; &lt;</div>
<div class="a" style="left:72px;top:601px;width:21px;height:14.799999999999955px;border:1px solid #7d8aa0;background:linear-gradient(#fbfdff,#e3eefa 50%,#c9dcf0);border-radius:1px"></div>
<div class="t" style="left:-117.50px;width:400px;text-align:center;top:603.83px;font:normal 9.3px/9.3px 'Liberation Sans';color:#333;">&gt; &gt;</div>
<div class="a" style="left:101.5px;top:601px;width:21.5px;height:14.799999999999955px;border:1px solid #7d8aa0;background:linear-gradient(#fbfdff,#e3eefa 50%,#c9dcf0);border-radius:1px"></div>
<div class="t" style="left:-87.75px;width:400px;text-align:center;top:603.83px;font:bold 9.3px/9.3px 'Liberation Sans';color:#333;">+</div>
<div class="a" style="left:122px;top:601px;width:22px;height:14.799999999999955px;border:1px solid #7d8aa0;background:linear-gradient(#fbfdff,#e3eefa 50%,#c9dcf0);border-radius:1px"></div>
<div class="t" style="left:-67.00px;width:400px;text-align:center;top:603.83px;font:bold 9.3px/9.3px 'Liberation Sans';color:#333;">-</div>
<div class="a" style="left:152px;top:601px;width:35px;height:15px;background:#fff;border:1px solid #9aa0a8;"></div>
<div class="t" style="left:-30.50px;width:400px;text-align:center;top:603.78px;font:normal 10.3px/10.3px 'Liberation Sans';color:#333;">2.72</div>
<div class="a" style="left:186px;top:601px;width:19px;height:14.799999999999955px;border:1px solid #7d8aa0;background:linear-gradient(#fbfdff,#e3eefa 50%,#c9dcf0);border-radius:1px"></div>
<div class="t" style="left:-4.50px;width:400px;text-align:center;top:603.83px;font:bold 9.3px/9.3px 'Liberation Sans';color:#333;">Go</div>
<div class="a" style="left:214px;top:601px;width:34px;height:15px;background:#fff;border:1px solid #9aa0a8;"></div>
<div class="t" style="left:31.00px;width:400px;text-align:center;top:603.78px;font:normal 10.3px/10.3px 'Liberation Sans';color:#333;">2.53</div>
<div class="a" style="left:247px;top:601px;width:21px;height:14.799999999999955px;border:1px solid #7d8aa0;background:linear-gradient(#fbfdff,#e3eefa 50%,#c9dcf0);border-radius:1px"></div>
<div class="t" style="left:57.50px;width:400px;text-align:center;top:603.83px;font:bold 9.3px/9.3px 'Liberation Sans';color:#333;">Set</div>
<div class="t" style="left:498.00px;top:593.19px;font:normal 11px/11px 'Liberation Sans';color:#333;">x</div>
<div class="t" style="left:504.00px;top:599.00px;font:normal 8.5px/8.5px 'Liberation Sans';color:#333;">top</div>
<div class="t" style="left:498.00px;top:617.69px;font:normal 11px/11px 'Liberation Sans';color:#333;">x</div>
<div class="t" style="left:504.00px;top:623.50px;font:normal 8.5px/8.5px 'Liberation Sans';color:#333;">bot</div>
<div class="a" style="left:519px;top:592px;width:82px;height:18px;border:1px solid #8c9bb3;background:linear-gradient(#fafafa,#ececec);"></div>
<div class="a" style="left:587px;top:592px;width:14px;height:18px;border:1px solid #8c9bb3;background:linear-gradient(#fbfdff,#dbe7f5 50%,#c4d7ee);"></div>
<div class="a" style="left:590.5px;top:599.5px;width:0;height:0;border-left:4px solid transparent;border-right:4px solid transparent;border-top:4px solid #222;box-sizing:content-box"></div>
<div class="t" style="left:522.50px;top:596.43px;font:bold 9.3px/9.3px 'Liberation Sans';color:#333;">Frequency</div>
<div class="a" style="left:604px;top:592px;width:73px;height:18px;border:1px solid #8c9bb3;background:linear-gradient(#fafafa,#ececec);"></div>
<div class="a" style="left:663px;top:592px;width:14px;height:18px;border:1px solid #8c9bb3;background:linear-gradient(#fbfdff,#dbe7f5 50%,#c4d7ee);"></div>
<div class="a" style="left:666.5px;top:599.5px;width:0;height:0;border-left:4px solid transparent;border-right:4px solid transparent;border-top:4px solid #222;box-sizing:content-box"></div>
<div class="t" style="left:607.50px;top:596.43px;font:bold 9.3px/9.3px 'Liberation Sans';color:#333;">GHz</div>
<div class="a" style="left:519px;top:615.8px;width:82px;height:18.200000000000045px;border:1px solid #8c9bb3;background:linear-gradient(#fafafa,#ececec);"></div>
<div class="a" style="left:587px;top:615.8px;width:14px;height:18.200000000000045px;border:1px solid #8c9bb3;background:linear-gradient(#fbfdff,#dbe7f5 50%,#c4d7ee);"></div>
<div class="a" style="left:590.5px;top:623.4px;width:0;height:0;border-left:4px solid transparent;border-right:4px solid transparent;border-top:4px solid #222;box-sizing:content-box"></div>
<div class="t" style="left:522.50px;top:620.33px;font:bold 9.3px/9.3px 'Liberation Sans';color:#333;">Wavelength</div>
<div class="a" style="left:604px;top:616.5px;width:73px;height:17.5px;border:1px solid #8c9bb3;background:linear-gradient(#fafafa,#ececec);"></div>
<div class="a" style="left:663px;top:616.5px;width:14px;height:17.5px;border:1px solid #8c9bb3;background:linear-gradient(#fbfdff,#dbe7f5 50%,#c4d7ee);"></div>
<div class="a" style="left:666.5px;top:623.75px;width:0;height:0;border-left:4px solid transparent;border-right:4px solid transparent;border-top:4px solid #222;box-sizing:content-box"></div>
<div class="t" style="left:607.50px;top:620.68px;font:bold 9.3px/9.3px 'Liberation Sans';color:#333;">µm</div>
<div class="a" style="left:687px;top:608.5px;width:10px;height:9.5px;border:1px solid #8da0be;background:linear-gradient(#f8fbff,#dce7f4);"></div>
<div class="t" style="left:699.50px;top:608.46px;font:bold 9.5px/9.5px 'Liberation Sans';color:#333;">Log</div>
<div class="a" style="left:725px;top:127px;width:256px;height:1px;background:#8da7d6;"></div>
<div class="a" style="left:725px;top:127px;width:1px;height:517px;background:#8da7d6;"></div>
<div class="a" style="left:726px;top:128px;width:1px;height:515px;background:#d3e1f3;"></div>
<div class="a" style="left:980px;top:127px;width:1px;height:517px;background:#b4c7e6;"></div>
<div class="a" style="left:979px;top:128px;width:1px;height:515px;background:#dfe8f4;"></div>
<div class="a" style="left:725px;top:642px;width:257px;height:1px;background:#8da7d6;"></div>
<div class="a" style="left:726px;top:101px;width:28.5px;height:14px;background:#f0f0f0;border:1px solid #a9b6cc;border-bottom:none;border-radius:4px 1px 0 0"></div>
<div class="a" style="left:753.5px;top:101px;width:41.0px;height:14px;background:#f0f0f0;border:1px solid #a9b6cc;border-bottom:none;border-radius:4px 1px 0 0"></div>
<div class="a" style="left:793.5px;top:101px;width:73.5px;height:14px;background:#f0f0f0;border:1px solid #a9b6cc;border-bottom:none;border-radius:4px 1px 0 0"></div>
<div class="t" style="left:732.50px;top:104.33px;font:bold 9.3px/9.3px 'Liberation Sans';color:#333;">Fit</div>
<div class="t" style="left:761.40px;top:104.33px;font:bold 9.3px/9.3px 'Liberation Sans';color:#333;">Tools</div>
<div class="t" style="left:800.70px;top:104.33px;font:bold 9.3px/9.3px 'Liberation Sans';color:#333;">Advanced Fit</div>
<div class="a" style="left:726px;top:114px;width:90.5px;height:14px;background:#c6dbf1;border:1px solid #8fa8d6;border-bottom:none;border-radius:4px 1px 0 0"></div>
<div class="a" style="left:815.5px;top:114px;width:86.5px;height:14px;background:#f0f0f0;border:1px solid #a9b6cc;border-bottom:none;border-radius:4px 1px 0 0"></div>
<div class="a" style="left:901px;top:114px;width:74.5px;height:14px;background:#f0f0f0;border:1px solid #a9b6cc;border-bottom:none;border-radius:4px 1px 0 0"></div>
<div class="a" style="left:726px;top:127px;width:90px;height:2px;background:#c6dbf1;"></div>
<div class="t" style="left:570.70px;width:400px;text-align:center;top:116.53px;font:bold 9.3px/9.3px 'Liberation Sans';color:#333;">InfoPanel</div>
<div class="t" style="left:657.00px;width:400px;text-align:center;top:116.53px;font:bold 9.3px/9.3px 'Liberation Sans';color:#333;">Overlays</div>
<div class="t" style="left:737.30px;width:400px;text-align:center;top:116.53px;font:bold 9.3px/9.3px 'Liberation Sans';color:#333;">Species</div>
<div class="a" style="left:727.5px;top:135px;width:248.5px;height:503.5px;border:1px solid #cfcfcf;"></div>
<div class="t" style="left:732.50px;top:131.53px;font:bold 9.3px/9.3px 'Liberation Sans';color:#333;background:#eeeeee;padding:0 2px;margin-left:-1px">Plot Info</div>
<div class="a" style="left:730.3px;top:143.3px;width:243.5px;height:265px;"></div>
<div class="a" style="left:730px;top:143px;width:244px;height:465px;border:1px solid #9a9a9a;border-right-color:#b0b0b0;"></div>
<div class="a" style="left:731px;top:144px;width:242px;height:463px;overflow:hidden;background:#eeeeee">
<div class="a" style="left:0.00px;top:-16.50px;width:230.00px;height:61.00px;border:1px solid #c6c6c6;box-shadow:inset 1px 1px 0 #f8f8f8"></div>
<div class="a" style="left:201.00px;top:-11.40px;width:25.00px;height:11.20px;border:1px solid #3d4450;background:linear-gradient(#fbfdff,#dae7f5 55%,#c2d6ee);border-radius:1px"></div>
<div class="t" style="left:210.00px;top:-10.89px;font:normal 10.5px/10.5px 'Liberation Sans';color:#222;">X</div>
<div class="a" style="left:8.00px;top:10.00px;width:9.50px;height:9.50px;border:1px solid #9cadc6;border-radius:1.5px;background:linear-gradient(#fafcff,#d6e4f4);"></div>
<div class="a" style="left:24.00px;top:11.10px;width:25.00px;height:7.00px;background:#00f000;box-shadow:0 0 0 0.6px rgba(60,80,110,0.35)"></div>
<div class="t" style="left:52.40px;top:11.43px;font:bold 9.3px/9.3px 'Liberation Sans';color:#333;">CassisTempFile_Vesta_200...</div>
<div class="a" style="left:184.00px;top:9.10px;width:14.00px;height:11.50px;border:1px solid #3d4450;background:linear-gradient(#fbfdff,#dae7f5 55%,#c2d6ee);border-radius:1px"></div>
<div class="a" style="left:188.00px;top:16.60px;width:6.00px;height:1.00px;background:repeating-linear-gradient(90deg,#333 0 1px,transparent 1px 2px)"></div>
<div class="t" style="left:33.40px;top:31.63px;font:bold 9.3px/9.3px 'Liberation Sans';color:#333;">in : SKY Lo [MHz] : unknow</div>
<div class="t" style="left:187.20px;top:31.63px;font:bold 9.3px/9.3px 'Liberation Sans';color:#333;">vlsr : 0</div>
<div class="a" style="left:0.00px;top:46.60px;width:230.00px;height:61.00px;border:1px solid #c6c6c6;box-shadow:inset 1px 1px 0 #f8f8f8"></div>
<div class="t" style="left:1.80px;top:52.53px;font:bold 9.3px/9.3px 'Liberation Sans';color:#333;text-decoration:underline;text-underline-offset:1px">Spectrum Analysis 5</div>
<div class="a" style="left:201.00px;top:51.70px;width:25.00px;height:11.20px;border:1px solid #3d4450;background:linear-gradient(#fbfdff,#dae7f5 55%,#c2d6ee);border-radius:1px"></div>
<div class="t" style="left:210.00px;top:52.21px;font:normal 10.5px/10.5px 'Liberation Sans';color:#222;">X</div>
<div class="a" style="left:8.00px;top:73.10px;width:9.50px;height:9.50px;border:1px solid #9cadc6;border-radius:1.5px;background:linear-gradient(#fafcff,#d6e4f4);"></div>
<svg class="a" style="left:8px;top:73.1px" width="10" height="10" viewBox="0 0 10 10"><path d="M2.4,4.6 L3.4,7.2 L7.2,3.2" stroke="#2a2a2a" stroke-width="1.6" fill="none" stroke-linejoin="miter"/></svg>
<div class="a" style="left:24.00px;top:74.20px;width:25.00px;height:7.00px;background:#808080;box-shadow:0 0 0 0.6px rgba(60,80,110,0.35)"></div>
<div class="t" style="left:52.40px;top:74.53px;font:bold 9.3px/9.3px 'Liberation Sans';color:#333;">CassisTempFile_c1mt02134...</div>
<div class="a" style="left:189.00px;top:72.20px;width:14.00px;height:11.50px;border:1px solid #3d4450;background:linear-gradient(#fbfdff,#dae7f5 55%,#c2d6ee);border-radius:1px"></div>
<div class="a" style="left:193.00px;top:79.70px;width:6.00px;height:1.00px;background:repeating-linear-gradient(90deg,#333 0 1px,transparent 1px 2px)"></div>
<div class="t" style="left:33.40px;top:94.73px;font:bold 9.3px/9.3px 'Liberation Sans';color:#333;">in : SKY Lo [MHz] : unknow</div>
<div class="t" style="left:187.20px;top:94.73px;font:bold 9.3px/9.3px 'Liberation Sans';color:#333;">vlsr : 0</div>
<div class="a" style="left:0.00px;top:109.70px;width:230.00px;height:61.00px;border:1px solid #c6c6c6;box-shadow:inset 1px 1px 0 #f8f8f8"></div>
<div class="t" style="left:1.80px;top:115.63px;font:bold 9.3px/9.3px 'Liberation Sans';color:#333;text-decoration:underline;text-underline-offset:1px">Spectrum Analysis 6</div>
<div class="a" style="left:201.00px;top:114.80px;width:25.00px;height:11.20px;border:1px solid #3d4450;background:linear-gradient(#fbfdff,#dae7f5 55%,#c2d6ee);border-radius:1px"></div>
<div class="t" style="left:210.00px;top:115.31px;font:normal 10.5px/10.5px 'Liberation Sans';color:#222;">X</div>
<div class="a" style="left:8.00px;top:136.20px;width:9.50px;height:9.50px;border:1px solid #9cadc6;border-radius:1.5px;background:linear-gradient(#fafcff,#d6e4f4);"></div>
<svg class="a" style="left:8px;top:136.2px" width="10" height="10" viewBox="0 0 10 10"><path d="M2.4,4.6 L3.4,7.2 L7.2,3.2" stroke="#2a2a2a" stroke-width="1.6" fill="none" stroke-linejoin="miter"/></svg>
<div class="a" style="left:24.00px;top:137.30px;width:25.00px;height:7.00px;background:#00f0ff;box-shadow:0 0 0 0.6px rgba(60,80,110,0.35)"></div>
<div class="t" style="left:52.40px;top:137.63px;font:bold 9.3px/9.3px 'Liberation Sans';color:#333;">CassisTempFile_c2mt03_bd...</div>
<div class="a" style="left:188.50px;top:135.30px;width:14.00px;height:11.50px;border:1px solid #3d4450;background:linear-gradient(#fbfdff,#dae7f5 55%,#c2d6ee);border-radius:1px"></div>
<div class="a" style="left:192.50px;top:142.80px;width:6.00px;height:1.00px;background:repeating-linear-gradient(90deg,#333 0 1px,transparent 1px 2px)"></div>
<div class="t" style="left:33.40px;top:157.83px;font:bold 9.3px/9.3px 'Liberation Sans';color:#333;">in : SKY Lo [MHz] : unknow</div>
<div class="t" style="left:187.20px;top:157.83px;font:bold 9.3px/9.3px 'Liberation Sans';color:#333;">vlsr : 0</div>
<div class="a" style="left:0.00px;top:172.80px;width:230.00px;height:61.00px;border:1px solid #c6c6c6;box-shadow:inset 1px 1px 0 #f8f8f8"></div>
<div class="t" style="left:1.80px;top:178.73px;font:bold 9.3px/9.3px 'Liberation Sans';color:#333;text-decoration:underline;text-underline-offset:1px">Spectrum Analysis 7</div>
<div class="a" style="left:201.00px;top:177.90px;width:25.00px;height:11.20px;border:1px solid #3d4450;background:linear-gradient(#fbfdff,#dae7f5 55%,#c2d6ee);border-radius:1px"></div>
<div class="t" style="left:210.00px;top:178.41px;font:normal 10.5px/10.5px 'Liberation Sans';color:#222;">X</div>
<div class="a" style="left:8.00px;top:199.30px;width:9.50px;height:9.50px;border:1px solid #9cadc6;border-radius:1.5px;background:linear-gradient(#fafcff,#d6e4f4);"></div>
<svg class="a" style="left:8px;top:199.3px" width="10" height="10" viewBox="0 0 10 10"><path d="M2.4,4.6 L3.4,7.2 L7.2,3.2" stroke="#2a2a2a" stroke-width="1.6" fill="none" stroke-linejoin="miter"/></svg>
<div class="a" style="left:24.00px;top:200.40px;width:25.00px;height:7.00px;background:#f8bc00;box-shadow:0 0 0 0.6px rgba(60,80,110,0.35)"></div>
<div class="t" style="left:52.40px;top:200.73px;font:bold 9.3px/9.3px 'Liberation Sans';color:#333;">CassisTempFile_c3mt02828...</div>
<div class="a" style="left:189.20px;top:198.40px;width:14.00px;height:11.50px;border:1px solid #3d4450;background:linear-gradient(#fbfdff,#dae7f5 55%,#c2d6ee);border-radius:1px"></div>
<div class="a" style="left:193.20px;top:205.90px;width:6.00px;height:1.00px;background:repeating-linear-gradient(90deg,#333 0 1px,transparent 1px 2px)"></div>
<div class="t" style="left:33.40px;top:220.93px;font:bold 9.3px/9.3px 'Liberation Sans';color:#333;">in : SKY Lo [MHz] : unknow</div>
<div class="t" style="left:187.20px;top:220.93px;font:bold 9.3px/9.3px 'Liberation Sans';color:#333;">vlsr : 0</div>
<div class="a" style="left:0.00px;top:235.90px;width:230.00px;height:61.00px;border:1px solid #c6c6c6;box-shadow:inset 1px 1px 0 #f8f8f8"></div>
<div class="t" style="left:1.80px;top:241.83px;font:bold 9.3px/9.3px 'Liberation Sans';color:#333;text-decoration:underline;text-underline-offset:1px">Spectrum Analysis 8</div>
<div class="a" style="left:201.00px;top:241.00px;width:25.00px;height:11.20px;border:1px solid #3d4450;background:linear-gradient(#fbfdff,#dae7f5 55%,#c2d6ee);border-radius:1px"></div>
<div class="t" style="left:210.00px;top:241.51px;font:normal 10.5px/10.5px 'Liberation Sans';color:#222;">X</div>
<div class="a" style="left:8.00px;top:262.40px;width:9.50px;height:9.50px;border:1px solid #9cadc6;border-radius:1.5px;background:linear-gradient(#fafcff,#d6e4f4);"></div>
<svg class="a" style="left:8px;top:262.4px" width="10" height="10" viewBox="0 0 10 10"><path d="M2.4,4.6 L3.4,7.2 L7.2,3.2" stroke="#2a2a2a" stroke-width="1.6" fill="none" stroke-linejoin="miter"/></svg>
<div class="a" style="left:24.00px;top:263.50px;width:25.00px;height:7.00px;background:#ff00ff;box-shadow:0 0 0 0.6px rgba(60,80,110,0.35)"></div>
<div class="t" style="left:52.40px;top:263.83px;font:bold 9.3px/9.3px 'Liberation Sans';color:#333;">CassisTempFile_c1mt05_bd...</div>
<div class="a" style="left:188.00px;top:261.50px;width:14.00px;height:11.50px;border:1px solid #3d4450;background:linear-gradient(#fbfdff,#dae7f5 55%,#c2d6ee);border-radius:1px"></div>
<div class="a" style="left:192.00px;top:269.00px;width:6.00px;height:1.00px;background:repeating-linear-gradient(90deg,#333 0 1px,transparent 1px 2px)"></div>
<div class="t" style="left:33.40px;top:284.03px;font:bold 9.3px/9.3px 'Liberation Sans';color:#333;">in : SKY Lo [MHz] : unknow</div>
<div class="t" style="left:187.20px;top:284.03px;font:bold 9.3px/9.3px 'Liberation Sans';color:#333;">vlsr : 0</div>
<div class="a" style="left:0.00px;top:299.00px;width:230.00px;height:61.00px;border:1px solid #c6c6c6;box-shadow:inset 1px 1px 0 #f8f8f8"></div>
<div class="t" style="left:1.80px;top:304.93px;font:bold 9.3px/9.3px 'Liberation Sans';color:#333;text-decoration:underline;text-underline-offset:1px">Spectrum Analysis 9</div>
<div class="a" style="left:201.00px;top:304.10px;width:25.00px;height:11.20px;border:1px solid #3d4450;background:linear-gradient(#fbfdff,#dae7f5 55%,#c2d6ee);border-radius:1px"></div>
<div class="t" style="left:210.00px;top:304.61px;font:normal 10.5px/10.5px 'Liberation Sans';color:#222;">X</div>
<div class="a" style="left:8.00px;top:325.50px;width:9.50px;height:9.50px;border:1px solid #9cadc6;border-radius:1.5px;background:linear-gradient(#fafcff,#d6e4f4);"></div>
<svg class="a" style="left:8px;top:325.5px" width="10" height="10" viewBox="0 0 10 10"><path d="M2.4,4.6 L3.4,7.2 L7.2,3.2" stroke="#2a2a2a" stroke-width="1.6" fill="none" stroke-linejoin="miter"/></svg>
<div class="a" style="left:24.00px;top:326.60px;width:25.00px;height:7.00px;background:#0000f0;box-shadow:0 0 0 0.6px rgba(60,80,110,0.35)"></div>
<div class="t" style="left:52.40px;top:326.93px;font:bold 9.3px/9.3px 'Liberation Sans';color:#333;">CassisTempFile_snc_zag1_...</div>
<div class="a" style="left:183.80px;top:324.60px;width:14.00px;height:11.50px;border:1px solid #3d4450;background:linear-gradient(#fbfdff,#dae7f5 55%,#c2d6ee);border-radius:1px"></div>
<div class="a" style="left:187.80px;top:332.10px;width:6.00px;height:1.00px;background:repeating-linear-gradient(90deg,#333 0 1px,transparent 1px 2px)"></div>
<div class="t" style="left:33.40px;top:347.13px;font:bold 9.3px/9.3px 'Liberation Sans';color:#333;">in : SKY Lo [MHz] : unknow</div>
<div class="t" style="left:187.20px;top:347.13px;font:bold 9.3px/9.3px 'Liberation Sans';color:#333;">vlsr : 0</div>
<div class="a" style="left:0.00px;top:362.10px;width:230.00px;height:119.00px;border:1px solid #c6c6c6;box-shadow:inset 1px 1px 0 #f8f8f8"></div>
<div class="t" style="left:1.80px;top:368.23px;font:bold 9.3px/9.3px 'Liberation Sans';color:#333;text-decoration:underline;text-underline-offset:1px">Tools Results</div>
<div class="a" style="left:201.00px;top:367.20px;width:25.00px;height:11.20px;border:1px solid #3d4450;background:linear-gradient(#fbfdff,#dae7f5 55%,#c2d6ee);border-radius:1px"></div>
<div class="t" style="left:210.00px;top:367.71px;font:normal 10.5px/10.5px 'Liberation Sans';color:#222;">X</div>
<div class="a" style="left:8.00px;top:388.70px;width:9.50px;height:9.50px;border:1px solid #9cadc6;border-radius:1.5px;background:linear-gradient(#fafcff,#d6e4f4);"></div>
<svg class="a" style="left:8px;top:388.7px" width="10" height="10" viewBox="0 0 10 10"><path d="M2.4,4.6 L3.4,7.2 L7.2,3.2" stroke="#2a2a2a" stroke-width="1.6" fill="none" stroke-linejoin="miter"/></svg>
<div class="a" style="left:24.00px;top:389.30px;width:25.00px;height:7.00px;background:#0000c8;"></div>
<div class="t" style="left:52.30px;top:388.87px;font:bold 9.6px/9.6px 'Liberation Sans';color:#333;">Result multiplyConstant 6</div>
<div class="a" style="left:174.50px;top:387.30px;width:14.00px;height:11.50px;border:1px solid #3d4450;background:linear-gradient(#fbfdff,#dae7f5 55%,#c2d6ee);border-radius:1px"></div>
<div class="a" style="left:178.50px;top:394.80px;width:6.00px;height:1.00px;background:repeating-linear-gradient(90deg,#333 0 1px,transparent 1px 2px)"></div>
<div class="t" style="left:33.40px;top:410.03px;font:bold 9.3px/9.3px 'Liberation Sans';color:#333;">in : SKY Lo [MHz] : unknow</div>
<div class="t" style="left:187.20px;top:410.03px;font:bold 9.3px/9.3px 'Liberation Sans';color:#333;">vlsr : 0</div>
<div class="a" style="left:8.00px;top:429.10px;width:9.50px;height:9.50px;border:1px solid #9cadc6;border-radius:1.5px;background:linear-gradient(#fafcff,#d6e4f4);"></div>
<svg class="a" style="left:8px;top:429.1px" width="10" height="10" viewBox="0 0 10 10"><path d="M2.4,4.6 L3.4,7.2 L7.2,3.2" stroke="#2a2a2a" stroke-width="1.6" fill="none" stroke-linejoin="miter"/></svg>
<div class="a" style="left:24.00px;top:429.70px;width:25.00px;height:7.00px;background:#c80000;"></div>
<div class="t" style="left:52.30px;top:429.27px;font:bold 9.6px/9.6px 'Liberation Sans';color:#333;">Result multiplyConstant 7</div>
<div class="a" style="left:174.50px;top:427.70px;width:14.00px;height:11.50px;border:1px solid #3d4450;background:linear-gradient(#fbfdff,#dae7f5 55%,#c2d6ee);border-radius:1px"></div>
<div class="a" style="left:178.50px;top:435.20px;width:6.00px;height:1.00px;background:repeating-linear-gradient(90deg,#333 0 1px,transparent 1px 2px)"></div>
<div class="t" style="left:33.40px;top:450.43px;font:bold 9.3px/9.3px 'Liberation Sans';color:#333;">in : SKY Lo [MHz] : unknow</div>
<div class="t" style="left:187.20px;top:450.43px;font:bold 9.3px/9.3px 'Liberation Sans';color:#333;">vlsr : 0</div>
<div class="a" style="left:201.00px;top:-1.00px;width:25.00px;height:2.00px;background:#3d4450"></div>
<div class="a" style="left:230.00px;top:0.00px;width:12.00px;height:463.00px;background:linear-gradient(90deg,#e4e4e4,#f6f6f6 50%,#e8e8e8);border-left:1px solid #c8c8c8;"></div>
<div class="a" style="left:230.00px;top:0.00px;width:12.00px;height:11.00px;background:linear-gradient(#fbfbfb,#e6e6e6);border-left:1px solid #c8c8c8;border-bottom:1px solid #b8c4d8"></div>
<div class="a" style="left:233.5px;top:2.5px;width:0;height:0;border-left:3.5px solid transparent;border-right:3.5px solid transparent;border-bottom:4px solid #222;box-sizing:content-box"></div>
<div class="a" style="left:230.00px;top:75.30px;width:12.00px;height:378.70px;border:1px solid #8fa8d6;background:linear-gradient(90deg,#bcd0ec,#f4f8fe 45%,#dce8f8 70%,#b8cce8);border-radius:2px"></div>
<div class="a" style="left:234.00px;top:263.30px;width:6.00px;height:1.00px;background:#8aa2d2"></div>
<div class="a" style="left:234.00px;top:265.50px;width:6.00px;height:1.00px;background:#8aa2d2"></div>
<div class="a" style="left:230.00px;top:454.00px;width:12.00px;height:9.00px;background:linear-gradient(#fbfbfb,#e6e6e6);border-left:1px solid #c8c8c8;border-top:1px solid #b8c4d8"></div>
<div class="a" style="left:233.5px;top:457.5px;width:0;height:0;border-left:3.5px solid transparent;border-right:3.5px solid transparent;border-top:4px solid #222;box-sizing:content-box"></div>
</div>
<div class="a" style="left:730px;top:610px;width:244px;height:27px;border:1px solid #9a9a9a;"></div>
<div class="a" style="left:814.5px;top:614.7px;width:75.5px;height:17.799999999999955px;border:1px solid #7d8aa0;background:linear-gradient(#fbfdff,#e3eefa 50%,#c9dcf0);border-radius:1px"></div>
<div class="t" style="left:652.25px;width:400px;text-align:center;top:618.86px;font:bold 9.5px/9.5px 'Liberation Sans';color:#333;">Remove All</div>
<svg class="a" style="left:0;top:0" width="1024" height="90" viewBox="0 0 1024 90">
<defs>
<linearGradient id="fold" x1="0" y1="0" x2="1" y2="0.6"><stop offset="0" stop-color="#b8dcfb"/><stop offset="0.45" stop-color="#6fa6ee"/><stop offset="1" stop-color="#2b5fd8"/></linearGradient>
<linearGradient id="flop" x1="0" y1="0" x2="0" y2="1"><stop offset="0" stop-color="#8aa6e4"/><stop offset="1" stop-color="#4a6cc8"/></linearGradient>
<linearGradient id="prt" x1="0" y1="0" x2="0" y2="1"><stop offset="0" stop-color="#777"/><stop offset="0.5" stop-color="#222"/><stop offset="1" stop-color="#000"/></linearGradient>
<radialGradient id="db" cx="0.45" cy="0.35" r="0.7"><stop offset="0" stop-color="#c8d8ff"/><stop offset="0.5" stop-color="#5a7cff"/><stop offset="1" stop-color="#2040e8"/></radialGradient>
</defs>
<path d="M56.8,62.2 Q56.8,61.2 57.8,61.2 L64.5,61.2 L66.5,63 L74.5,63 Q75.4,63 75.4,64 L75.4,75.8 Q75.4,76.5 74.6,76.5 L57.6,76.5 Q56.8,76.5 56.8,75.8 Z" fill="url(#fold)"/>
<rect x="57.2" y="72.6" width="17.8" height="2.4" fill="#eef0f2"/>
<path d="M57,66.5 Q66,64 75.2,64.5 L75.2,70 Q66,66.5 57,70 Z" fill="#ffffff" opacity="0.35"/>
<path d="M83.6,60 L94.2,60 L97.6,63.6 L97.6,77.4 L83.6,77.4 Z" fill="#9fcdf5" stroke="#1a1a1a" stroke-width="1"/>
<path d="M94.2,60.2 L94.2,63.6 L97.4,63.6 Z" fill="#fff" stroke="#333" stroke-width="0.6"/>
<circle cx="89.7" cy="69.4" r="4.4" fill="none" stroke="#111" stroke-width="1.3"/>
<path d="M92.8,72.6 L96,75.8" stroke="#111" stroke-width="1.6"/>
<path d="M86.8,70.5 L88,68.2 L89.2,71 L90.6,67.8 L91.6,70.2 L92.6,69" stroke="#111" stroke-width="0.9" fill="none"/>
<path d="M107.4,60.8 L123,60.8 L123,77 L108.4,77 L107.4,76 Z" fill="url(#flop)"/>
<rect x="109.4" y="62" width="12.4" height="6.8" fill="#f2f2fa"/>
<rect x="110.6" y="72.4" width="6.6" height="3.8" fill="#e8ecf6"/>
<rect x="137" y="61" width="9.6" height="4.6" fill="#8a8a8a"/>
<path d="M134,66 Q134,65 135,65 L148,65 Q149,65 149,66 L149,74 Q149,75 148,75 L135,75 Q134,75 134,74 Z" fill="url(#prt)"/>
<rect x="136.5" y="73" width="10" height="1.6" fill="#999"/>
<rect x="159.0" y="64" width="1.2" height="13.2" fill="#888"/>
<rect x="161.9" y="62.3" width="1.2" height="14.9" fill="#777"/>
<rect x="164.0" y="70.3" width="1.2" height="6.9" fill="#aaa"/>
<rect x="166.0" y="60" width="1.0" height="17.2" fill="#555"/>
<rect x="168.3" y="60.3" width="2.6" height="16.9" fill="#555"/>
<rect x="171.7" y="62.3" width="1.2" height="14.9" fill="#777"/>
<rect x="176.7" y="66.3" width="1.0" height="10.9" fill="#777"/>
<rect x="180.3" y="68.3" width="1.2" height="8.9" fill="#999"/>
<rect x="168.6" y="70.5" width="2.4" height="6.7" fill="#111"/>
<path d="M190.9,74.4 L197,74.4 L197.8,76.9 L199.8,65.6 L201.5,70 L203.1,77.6 L204.8,61 L206,70 L207.1,74.9 L208.8,70.3 L210.5,73 L211.8,74.4 L217.4,74.4" stroke="#000" stroke-width="1.5" fill="none" stroke-linejoin="round"/>
<path d="M223,76.2 L225.3,74.3 L226.6,62.3 L228,61 L229.3,63 L230.6,71.6 L232.3,76.9 L235.9,74.9 L239.9,76.9 L243.2,75.6 L251.2,76.2" stroke="#000" stroke-width="1.3" fill="none" stroke-linejoin="round"/>
<path d="M227.6,63 V77.6" stroke="#1010ff" stroke-width="1.6"/>
<circle cx="244.9" cy="75.6" r="1" fill="#22cc22"/>
<path d="M249.2,73.8 V77.4 M247.6,75.6 H250.8" stroke="#ee1111" stroke-width="1"/>
<path d="M257.2,60 Q262,60 264.5,61.5 Q268,64 269.5,70 L270.8,77.6 L272.2,70 Q273.8,63.5 277,61.5 Q280,60 283.4,60" stroke="#0d730d" stroke-width="2" fill="none" stroke-linecap="round"/>
<path d="M290,77.2 L299.3,76.6 L300.6,70.9 L301.9,74.3 L303.3,62.3 L304.6,73.6 L306.9,66.6 L308.6,75.6 L312.6,77.2 L316.5,76.6" stroke="#000" stroke-width="0.95" fill="none" stroke-linejoin="round"/>
<path d="M300.3,63.6 V61.1 H307.4 V63.6" stroke="#2020ee" stroke-width="1.5" fill="none"/>
<path d="M323.2,60.6 L335.1,72.6" stroke="#ee1111" stroke-width="1.6"/>
<path d="M326,63.2 L327.2,64.6 M329,66.4 L330.4,67.6 M332,69.4 L333,70.6" stroke="#222" stroke-width="1.4"/>
<path d="M335.1,72.6 L340,74.5 L344,75.2 L349.7,76.8" stroke="#2424ee" stroke-width="1.5" fill="none"/>
<path d="M338,73.6 L339.5,74.5 M342.5,74.8 L344,75.5" stroke="#111" stroke-width="1.4"/>
<ellipse cx="368.8" cy="68.9" rx="8.2" ry="6.4" transform="rotate(-40 368.8 68.9)" fill="none" stroke="#e87890" stroke-width="0.8" opacity="0.55"/>
<ellipse cx="368.8" cy="68.9" rx="7.2" ry="5.6" transform="rotate(-40 368.8 68.9)" fill="none" stroke="#e87890" stroke-width="0.8" opacity="0.5"/>
<ellipse cx="368.8" cy="68.9" rx="6.2" ry="4.8" transform="rotate(-40 368.8 68.9)" fill="none" stroke="#e87890" stroke-width="0.8" opacity="0.45"/>
<ellipse cx="368.8" cy="68.9" rx="5.2" ry="4.1" transform="rotate(-40 368.8 68.9)" fill="none" stroke="#e87890" stroke-width="0.8" opacity="0.45"/>
<ellipse cx="368.8" cy="68.9" rx="4.2" ry="3.3" transform="rotate(-40 368.8 68.9)" fill="none" stroke="#e87890" stroke-width="0.8" opacity="0.5"/>
<path d="M391.6,63 Q391.6,60.8 399.7,60.8 Q407.8,60.8 407.8,63 L407.8,75.6 Q407.8,77.8 399.7,77.8 Q391.6,77.8 391.6,75.6 Z" fill="url(#db)"/>
<path d="M392,65.2 Q399.7,67.2 407.4,65.2" stroke="#e8eeff" stroke-width="0.9" fill="none" opacity="0.9"/>
<path d="M392,69.6 Q399.7,71.6 407.4,69.6" stroke="#e8eeff" stroke-width="0.9" fill="none" opacity="0.9"/>
<path d="M392,73.8 Q399.7,75.8 407.4,73.8" stroke="#e8eeff" stroke-width="0.9" fill="none" opacity="0.9"/>
<ellipse cx="399.7" cy="62.6" rx="5" ry="1.3" fill="#e8f0ff" opacity="0.8"/>
<path d="M423.5,61.3 Q419,61.3 419,63.5 L419,65.6 L423.6,65.6 L423.6,66.4 L417.8,66.4 Q415.9,66.4 415.9,69.6 Q415.9,72.8 417.8,72.8 L419,72.8 L419,70.4 Q419,68.6 421,68.6 L425,68.6 Q426.8,68.6 426.8,66.8 L426.8,63.5 Q426.8,61.3 423.5,61.3 Z" fill="#3c72a6"/>
<path d="M424.7,76.8 Q429.2,76.8 429.2,74.6 L429.2,72.5 L424.6,72.5 L424.6,71.7 L430.4,71.7 Q432.3,71.7 432.3,68.5 Q432.3,65.3 430.4,65.3 L429.2,65.3 L429.2,67.7 Q429.2,69.5 427.2,69.5 L423.2,69.5 Q421.4,69.5 421.4,71.3 L421.4,74.6 Q421.4,76.8 424.7,76.8 Z" fill="#f7cf3f"/>
<circle cx="421.2" cy="62.9" r="0.6" fill="#fff"/><circle cx="427" cy="75.2" r="0.6" fill="#fff"/>
</svg>
</body></html>
